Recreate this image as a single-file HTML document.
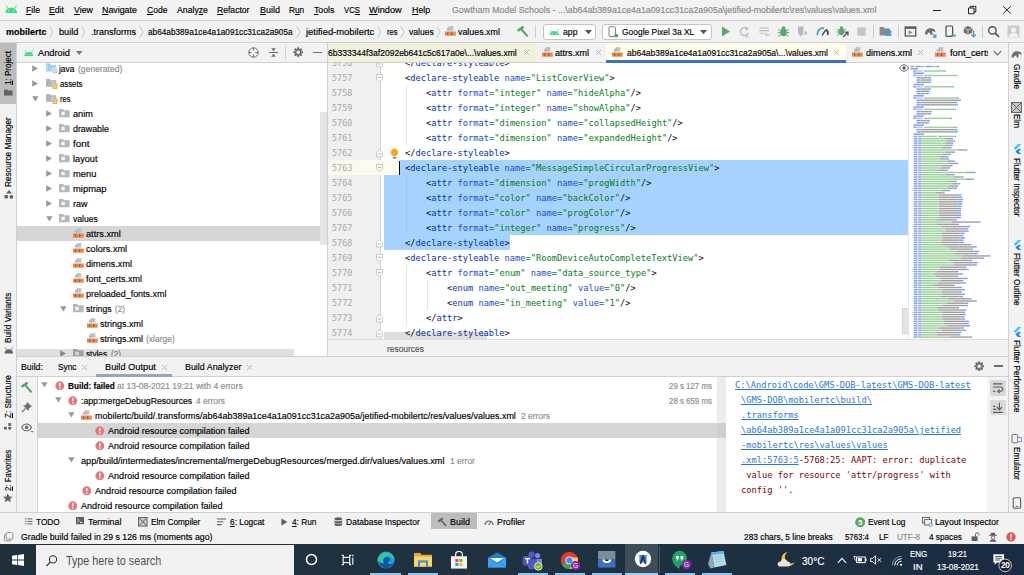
<!DOCTYPE html>
<html><head><meta charset="utf-8"><title>Android Studio</title>
<style>
html,body{margin:0;padding:0;}
body{width:1024px;height:575px;overflow:hidden;position:relative;background:#f2f2f2;font-family:"Liberation Sans",sans-serif;font-size:9px;color:#000;}
.b{position:absolute;box-sizing:border-box;overflow:hidden;}
.t{position:absolute;white-space:pre;display:block;transform-origin:0 50%;-webkit-text-stroke:0.16px;}
.t u{text-decoration:underline;text-underline-offset:1px;text-decoration-thickness:0.8px;}
.c{position:absolute;white-space:pre;font-family:"DejaVu Sans Mono","Liberation Mono",monospace;font-size:8.1px;line-height:15px;height:15px;transform-origin:0 0;transform:scaleX(1.0755);color:#080808;}
.tg{color:#0033b3}.an{color:#174ad4}.av{color:#067d17}
.v{position:absolute;white-space:pre;transform-origin:0 0;transform:rotate(90deg);font-size:9px;line-height:12px;}
.vl{position:absolute;white-space:pre;transform-origin:0 0;transform:rotate(-90deg);font-size:9px;line-height:12px;}
a.lk{color:#2d76d2;text-decoration:underline;text-underline-offset:1px;text-decoration-thickness:0.7px;}
</style></head><body>
<div class="b" style="left:0.00px;top:43.00px;width:16.00px;height:469.00px;background:#f2f2f2;"></div>
<div class="b" style="left:16.00px;top:43.00px;width:1.00px;height:469.00px;background:#d1d1d1;"></div>
<div class="b" style="left:0.00px;top:43.00px;width:16.00px;height:61.00px;background:#bdbdbd;"></div>
<span class="t" style="transform-origin:0 0;transform:rotate(-90deg) scaleX(0.9044);line-height:12px;left:1.80px;top:85.00px;font-size:8.90px;color:#000;"><u>1</u>: Project</span>
<svg class="b" style="left:4.20px;top:88.60px;" width="9" height="7" viewBox="0 0 9 7"><path d="M0 0.4 H3.4 L4.4 1.5 H8.6 V6.6 H0 Z" fill="#5e6468"/></svg>
<span class="t" style="transform-origin:0 0;transform:rotate(-90deg) scaleX(0.9249);line-height:12px;left:1.80px;top:186.50px;font-size:8.90px;color:#000;">Resource Manager</span>
<svg class="b" style="left:3.50px;top:190.00px;" width="10" height="9" viewBox="0 0 10 9"><path d="M5 0 L8 3.6 H2 Z" fill="#5e6468"/><rect x="0.5" y="5" width="3.4" height="3.4" fill="#5e6468"/><circle cx="7.4" cy="6.8" r="1.9" fill="#5e6468"/></svg>
<span class="t" style="transform-origin:0 0;transform:rotate(-90deg) scaleX(0.9309);line-height:12px;left:1.80px;top:343.00px;font-size:8.90px;color:#000;">Build Variants</span>
<svg class="b" style="left:3.60px;top:347.20px;" width="9.6" height="7" viewBox="0 0 11 8"><path d="M0.5 7.5 A5 5 0 0 1 10.5 7.5 Z" fill="#5e6468"/><path d="M2.6 3 L1.4 0.8 M8.4 3 L9.6 0.8" stroke="#5e6468" stroke-width="0.9"/></svg>
<span class="t" style="transform-origin:0 0;transform:rotate(-90deg) scaleX(0.9207);line-height:12px;left:1.80px;top:418.20px;font-size:8.90px;color:#000;"><u>Z</u>: Structure</span>
<svg class="b" style="left:4.40px;top:423.20px;" width="8" height="6.6" viewBox="0 0 10 8"><rect x="0" y="4.6" width="3.6" height="3.4" fill="#5e6468"/><rect x="5.4" y="4.6" width="3.6" height="3.4" fill="#5e6468"/><rect x="5.4" y="0" width="3.6" height="3.4" fill="#5e6468"/></svg>
<span class="t" style="transform-origin:0 0;transform:rotate(-90deg) scaleX(0.8905);line-height:12px;left:1.80px;top:490.50px;font-size:8.90px;color:#000;"><u>2</u>: Favorites</span>
<svg class="b" style="left:3.40px;top:493.20px;" width="9.6" height="9.6" viewBox="0 0 11 11"><path d="M5.5 0.4 L7.1 3.9 L10.9 4.3 L8.1 6.9 L8.9 10.6 L5.5 8.7 L2.1 10.6 L2.9 6.9 L0.1 4.3 L3.9 3.9 Z" fill="#5e6468"/></svg>
<div class="b" style="left:17.00px;top:43.00px;width:310.00px;height:19.00px;background:#f2f2f2;"></div>
<div class="b" style="left:17.00px;top:62.00px;width:310.00px;height:1.00px;background:#d1d1d1;"></div>
<svg class="b" style="left:24.00px;top:49.60px;" width="9.6" height="6.336" viewBox="0 0 12 8"><path d="M0.3 8 A5.7 5.6 0 0 1 11.7 8 Z" fill="#3ddc84"/><path d="M2.6 3.2 L1.2 0.8 M9.4 3.2 L10.8 0.8" stroke="#3ddc84" stroke-width="0.9" stroke-linecap="round"/><circle cx="3.6" cy="5.6" r="0.6" fill="#fff"/><circle cx="8.4" cy="5.6" r="0.6" fill="#fff"/></svg>
<span class="t " style="left:37.50px;top:45.70px;line-height:14px;font-size:8.90px;color:#000;transform:scaleX(1.0432);">Android</span>
<svg class="b" style="left:75.50px;top:51.00px;" width="7" height="5" viewBox="0 0 7 5"><path d="M0 0 H6.6 L3.3 4 Z" fill="#7a7a7a"/></svg>
<svg class="b" style="left:247.00px;top:46.00px;" width="13" height="13" viewBox="0 0 13 13"><circle cx="6.5" cy="6.5" r="4.7" fill="none" stroke="#6e6e6e" stroke-width="1"/><path d="M6.5 1.8 V4.6 M6.5 8.4 V11.2 M1.8 6.5 H4.6 M8.4 6.5 H11.2" stroke="#6e6e6e" stroke-width="1"/></svg>
<svg class="b" style="left:266.50px;top:46.00px;" width="13" height="13" viewBox="0 0 13 13"><path d="M2 6.5 H11" stroke="#6e6e6e" stroke-width="1.1"/><path d="M6.5 5.2 L4.2 2.2 H8.8 Z M6.5 7.8 L4.2 10.8 H8.8 Z" fill="#6e6e6e"/></svg>
<div class="b" style="left:285.00px;top:46.00px;width:1.00px;height:13.00px;background:#d0d0d0;"></div>
<svg class="b" style="left:292.50px;top:47.10px;" width="10.4" height="10.4" viewBox="0 0 12 12"><path d="M9.60 6.00 L11.60 6.00 M8.55 8.55 L9.96 9.96 M6.00 9.60 L6.00 11.60 M3.45 8.55 L2.04 9.96 M2.40 6.00 L0.40 6.00 M3.45 3.45 L2.04 2.04 M6.00 2.40 L6.00 0.40 M8.55 3.45 L9.96 2.04 " stroke="#6e6e6e" stroke-width="2.2"/><circle cx="6" cy="6" r="3.1" fill="none" stroke="#6e6e6e" stroke-width="2"/></svg>
<div class="b" style="left:312.50px;top:51.50px;width:9.00px;height:1.40px;background:#6e6e6e;"></div>
<div class="b" style="left:17.00px;top:63.00px;width:310.00px;height:293.00px;background:#fff;"></div>
<svg class="b" style="left:32.00px;top:64.50px;" width="7" height="8" viewBox="0 0 7 8"><path d="M0.2 0.2 V6.8 L6 3.5 Z" fill="#999"/></svg>
<svg class="b" style="left:46.00px;top:63.30px;" width="12" height="12" viewBox="0 0 12 12"><path d="M0 0.6 H4 L5 1.9 H10.2 V8.4 H0 Z" fill="#9ed0f3"/><path d="M1.2 1.4 V7.4" stroke="#cfe8fa" stroke-width="0.8"/><circle cx="8.8" cy="8" r="3.2" fill="#fff"/><path d="M8.8 5.2 V10.8 M6 8 H11.6 M6.8 6 L10.8 10 M10.8 6 L6.8 10" stroke="#8c9ba8" stroke-width="0.8"/><circle cx="8.8" cy="8" r="0.9" fill="#fff"/></svg>
<span class="t " style="left:59.00px;top:62.00px;line-height:14px;font-size:8.90px;color:#000;transform:scaleX(0.9494);">java</span>
<span class="t " style="left:78.00px;top:62.00px;line-height:14px;font-size:8.90px;color:#8c8c8c;transform:scaleX(0.9672);">(generated)</span>
<svg class="b" style="left:32.00px;top:79.50px;" width="7" height="8" viewBox="0 0 7 8"><path d="M0.2 0.2 V6.8 L6 3.5 Z" fill="#999"/></svg>
<svg class="b" style="left:46.00px;top:78.30px;" width="12" height="12" viewBox="0 0 12 12"><path d="M0 1 H4 L5 2.3 H10.2 V8.8 H0 Z" fill="#aab6c0"/><path d="M5.2 3.6 H9 V8.8 H5.2 Z" fill="#c3ccd3"/><rect x="6.5" y="5.4" width="4.9" height="5.6" fill="#f2b05c"/><path d="M7.4 7 H10.4 M7.4 8.3 H10.4 M7.4 9.6 H10.4" stroke="#f9d9ae" stroke-width="0.6"/></svg>
<span class="t " style="left:59.50px;top:77.00px;line-height:14px;font-size:8.90px;color:#000;transform:scaleX(0.8748);">assets</span>
<svg class="b" style="left:31.00px;top:96.10px;" width="9" height="7" viewBox="0 0 9 7"><path d="M1.2 0.2 H7.6 L4.4 5.6 Z" fill="#999"/></svg>
<svg class="b" style="left:46.00px;top:93.30px;" width="12" height="12" viewBox="0 0 12 12"><path d="M0 1 H4 L5 2.3 H10.2 V8.8 H0 Z" fill="#aab6c0"/><path d="M5.2 3.6 H9 V8.8 H5.2 Z" fill="#c3ccd3"/><rect x="6.5" y="5.4" width="4.9" height="5.6" fill="#f2b05c"/><path d="M7.4 7 H10.4 M7.4 8.3 H10.4 M7.4 9.6 H10.4" stroke="#f9d9ae" stroke-width="0.6"/></svg>
<span class="t " style="left:59.50px;top:92.00px;line-height:14px;font-size:8.90px;color:#000;transform:scaleX(0.8493);">res</span>
<svg class="b" style="left:46.00px;top:109.50px;" width="7" height="8" viewBox="0 0 7 8"><path d="M0.2 0.2 V6.8 L6 3.5 Z" fill="#999"/></svg>
<svg class="b" style="left:59.00px;top:108.30px;" width="12" height="12" viewBox="0 0 12 12"><path d="M0 1 H4 L5 2.3 H10.6 V9.2 H0 Z" fill="#aeb9c2"/><rect x="2.4" y="3.8" width="3.4" height="3.4" fill="#f4f6f7"/></svg>
<span class="t " style="left:72.50px;top:107.00px;line-height:14px;font-size:8.90px;color:#000;transform:scaleX(1.0368);">anim</span>
<svg class="b" style="left:46.00px;top:124.50px;" width="7" height="8" viewBox="0 0 7 8"><path d="M0.2 0.2 V6.8 L6 3.5 Z" fill="#999"/></svg>
<svg class="b" style="left:59.00px;top:123.30px;" width="12" height="12" viewBox="0 0 12 12"><path d="M0 1 H4 L5 2.3 H10.6 V9.2 H0 Z" fill="#aeb9c2"/><rect x="2.4" y="3.8" width="3.4" height="3.4" fill="#f4f6f7"/></svg>
<span class="t " style="left:72.50px;top:122.00px;line-height:14px;font-size:8.90px;color:#000;transform:scaleX(0.9968);">drawable</span>
<svg class="b" style="left:46.00px;top:139.50px;" width="7" height="8" viewBox="0 0 7 8"><path d="M0.2 0.2 V6.8 L6 3.5 Z" fill="#999"/></svg>
<svg class="b" style="left:59.00px;top:138.30px;" width="12" height="12" viewBox="0 0 12 12"><path d="M0 1 H4 L5 2.3 H10.6 V9.2 H0 Z" fill="#aeb9c2"/><rect x="2.4" y="3.8" width="3.4" height="3.4" fill="#f4f6f7"/></svg>
<span class="t " style="left:72.50px;top:137.00px;line-height:14px;font-size:8.90px;color:#000;transform:scaleX(1.1116);">font</span>
<svg class="b" style="left:46.00px;top:154.50px;" width="7" height="8" viewBox="0 0 7 8"><path d="M0.2 0.2 V6.8 L6 3.5 Z" fill="#999"/></svg>
<svg class="b" style="left:59.00px;top:153.30px;" width="12" height="12" viewBox="0 0 12 12"><path d="M0 1 H4 L5 2.3 H10.6 V9.2 H0 Z" fill="#aeb9c2"/><rect x="2.4" y="3.8" width="3.4" height="3.4" fill="#f4f6f7"/></svg>
<span class="t " style="left:72.50px;top:152.00px;line-height:14px;font-size:8.90px;color:#000;transform:scaleX(1.0317);">layout</span>
<svg class="b" style="left:46.00px;top:169.50px;" width="7" height="8" viewBox="0 0 7 8"><path d="M0.2 0.2 V6.8 L6 3.5 Z" fill="#999"/></svg>
<svg class="b" style="left:59.00px;top:168.30px;" width="12" height="12" viewBox="0 0 12 12"><path d="M0 1 H4 L5 2.3 H10.6 V9.2 H0 Z" fill="#aeb9c2"/><rect x="2.4" y="3.8" width="3.4" height="3.4" fill="#f4f6f7"/></svg>
<span class="t " style="left:72.50px;top:167.00px;line-height:14px;font-size:8.90px;color:#000;transform:scaleX(1.0557);">menu</span>
<svg class="b" style="left:46.00px;top:184.50px;" width="7" height="8" viewBox="0 0 7 8"><path d="M0.2 0.2 V6.8 L6 3.5 Z" fill="#999"/></svg>
<svg class="b" style="left:59.00px;top:183.30px;" width="12" height="12" viewBox="0 0 12 12"><path d="M0 1 H4 L5 2.3 H10.6 V9.2 H0 Z" fill="#aeb9c2"/><rect x="2.4" y="3.8" width="3.4" height="3.4" fill="#f4f6f7"/></svg>
<span class="t " style="left:72.50px;top:182.00px;line-height:14px;font-size:8.90px;color:#000;transform:scaleX(1.0584);">mipmap</span>
<svg class="b" style="left:46.00px;top:199.50px;" width="7" height="8" viewBox="0 0 7 8"><path d="M0.2 0.2 V6.8 L6 3.5 Z" fill="#999"/></svg>
<svg class="b" style="left:59.00px;top:198.30px;" width="12" height="12" viewBox="0 0 12 12"><path d="M0 1 H4 L5 2.3 H10.6 V9.2 H0 Z" fill="#aeb9c2"/><rect x="2.4" y="3.8" width="3.4" height="3.4" fill="#f4f6f7"/></svg>
<span class="t " style="left:72.50px;top:197.00px;line-height:14px;font-size:8.90px;color:#000;transform:scaleX(1.0111);">raw</span>
<svg class="b" style="left:45.00px;top:216.10px;" width="9" height="7" viewBox="0 0 9 7"><path d="M1.2 0.2 H7.6 L4.4 5.6 Z" fill="#999"/></svg>
<svg class="b" style="left:59.00px;top:213.30px;" width="12" height="12" viewBox="0 0 12 12"><path d="M0 1 H4 L5 2.3 H10.6 V9.2 H0 Z" fill="#aeb9c2"/><rect x="2.4" y="3.8" width="3.4" height="3.4" fill="#f4f6f7"/></svg>
<span class="t " style="left:72.50px;top:212.00px;line-height:14px;font-size:8.90px;color:#000;transform:scaleX(0.9718);">values</span>
<div class="b" style="left:17.00px;top:226.20px;width:303.00px;height:15.00px;background:#d5d5d5;"></div>
<svg class="b" style="left:73.00px;top:227.70px;" width="11" height="11" viewBox="0 0 12 12"><rect x="0" y="6" width="11.8" height="4.6" fill="#f0884a"/><path d="M3.6 7.2 L2.3 8.3 L3.6 9.4 M6.6 7.2 L7.9 8.3 L6.6 9.4" stroke="#4a3226" stroke-width="0.85" fill="none"/><path d="M2 5 V2.8 L4.6 0.3 H9 V5 Z" fill="#a9b3bb"/><path d="M2 2.8 L4.6 0.3 V2.8 Z" fill="#d5dade"/><path d="M6.2 0.6 V4.6 M7.8 0.6 V4.6" stroke="#e9ecee" stroke-width="0.5"/></svg>
<span class="t " style="left:86.40px;top:227.00px;line-height:14px;font-size:8.90px;color:#000;transform:scaleX(1.0380);">attrs.xml</span>
<svg class="b" style="left:73.00px;top:242.70px;" width="11" height="11" viewBox="0 0 12 12"><rect x="0" y="6" width="11.8" height="4.6" fill="#f0884a"/><path d="M3.6 7.2 L2.3 8.3 L3.6 9.4 M6.6 7.2 L7.9 8.3 L6.6 9.4" stroke="#4a3226" stroke-width="0.85" fill="none"/><path d="M2 5 V2.8 L4.6 0.3 H9 V5 Z" fill="#a9b3bb"/><path d="M2 2.8 L4.6 0.3 V2.8 Z" fill="#d5dade"/><path d="M6.2 0.6 V4.6 M7.8 0.6 V4.6" stroke="#e9ecee" stroke-width="0.5"/></svg>
<span class="t " style="left:86.40px;top:242.00px;line-height:14px;font-size:8.90px;color:#000;transform:scaleX(1.0286);">colors.xml</span>
<svg class="b" style="left:73.00px;top:257.70px;" width="11" height="11" viewBox="0 0 12 12"><rect x="0" y="6" width="11.8" height="4.6" fill="#f0884a"/><path d="M3.6 7.2 L2.3 8.3 L3.6 9.4 M6.6 7.2 L7.9 8.3 L6.6 9.4" stroke="#4a3226" stroke-width="0.85" fill="none"/><path d="M2 5 V2.8 L4.6 0.3 H9 V5 Z" fill="#a9b3bb"/><path d="M2 2.8 L4.6 0.3 V2.8 Z" fill="#d5dade"/><path d="M6.2 0.6 V4.6 M7.8 0.6 V4.6" stroke="#e9ecee" stroke-width="0.5"/></svg>
<span class="t " style="left:86.40px;top:257.00px;line-height:14px;font-size:8.90px;color:#000;transform:scaleX(1.0244);">dimens.xml</span>
<svg class="b" style="left:73.00px;top:272.70px;" width="11" height="11" viewBox="0 0 12 12"><rect x="0" y="6" width="11.8" height="4.6" fill="#f0884a"/><path d="M3.6 7.2 L2.3 8.3 L3.6 9.4 M6.6 7.2 L7.9 8.3 L6.6 9.4" stroke="#4a3226" stroke-width="0.85" fill="none"/><path d="M2 5 V2.8 L4.6 0.3 H9 V5 Z" fill="#a9b3bb"/><path d="M2 2.8 L4.6 0.3 V2.8 Z" fill="#d5dade"/><path d="M6.2 0.6 V4.6 M7.8 0.6 V4.6" stroke="#e9ecee" stroke-width="0.5"/></svg>
<span class="t " style="left:86.40px;top:272.00px;line-height:14px;font-size:8.90px;color:#000;transform:scaleX(1.0128);">font_certs.xml</span>
<svg class="b" style="left:73.00px;top:287.70px;" width="11" height="11" viewBox="0 0 12 12"><rect x="0" y="6" width="11.8" height="4.6" fill="#f0884a"/><path d="M3.6 7.2 L2.3 8.3 L3.6 9.4 M6.6 7.2 L7.9 8.3 L6.6 9.4" stroke="#4a3226" stroke-width="0.85" fill="none"/><path d="M2 5 V2.8 L4.6 0.3 H9 V5 Z" fill="#a9b3bb"/><path d="M2 2.8 L4.6 0.3 V2.8 Z" fill="#d5dade"/><path d="M6.2 0.6 V4.6 M7.8 0.6 V4.6" stroke="#e9ecee" stroke-width="0.5"/></svg>
<span class="t " style="left:86.40px;top:287.00px;line-height:14px;font-size:8.90px;color:#000;transform:scaleX(1.0057);">preloaded_fonts.xml</span>
<svg class="b" style="left:58.50px;top:306.10px;" width="9" height="7" viewBox="0 0 9 7"><path d="M1.2 0.2 H7.6 L4.4 5.6 Z" fill="#999"/></svg>
<svg class="b" style="left:73.00px;top:303.30px;" width="12" height="12" viewBox="0 0 12 12"><path d="M0 1 H4 L5 2.3 H10.6 V9.2 H0 Z" fill="#aeb9c2"/><rect x="2.4" y="3.8" width="3.4" height="3.4" fill="#f4f6f7"/></svg>
<span class="t " style="left:86.40px;top:302.00px;line-height:14px;font-size:8.90px;color:#000;transform:scaleX(0.9767);">strings</span>
<span class="t " style="left:115.00px;top:302.00px;line-height:14px;font-size:8.90px;color:#8c8c8c;transform:scaleX(0.9194);">(2)</span>
<svg class="b" style="left:86.50px;top:317.70px;" width="11" height="11" viewBox="0 0 12 12"><rect x="0" y="6" width="11.8" height="4.6" fill="#f0884a"/><path d="M3.6 7.2 L2.3 8.3 L3.6 9.4 M6.6 7.2 L7.9 8.3 L6.6 9.4" stroke="#4a3226" stroke-width="0.85" fill="none"/><path d="M2 5 V2.8 L4.6 0.3 H9 V5 Z" fill="#a9b3bb"/><path d="M2 2.8 L4.6 0.3 V2.8 Z" fill="#d5dade"/><path d="M6.2 0.6 V4.6 M7.8 0.6 V4.6" stroke="#e9ecee" stroke-width="0.5"/></svg>
<span class="t " style="left:100.00px;top:317.00px;line-height:14px;font-size:8.90px;color:#000;transform:scaleX(1.0112);">strings.xml</span>
<svg class="b" style="left:86.50px;top:332.70px;" width="11" height="11" viewBox="0 0 12 12"><rect x="0" y="6" width="11.8" height="4.6" fill="#f0884a"/><path d="M3.6 7.2 L2.3 8.3 L3.6 9.4 M6.6 7.2 L7.9 8.3 L6.6 9.4" stroke="#4a3226" stroke-width="0.85" fill="none"/><path d="M2 5 V2.8 L4.6 0.3 H9 V5 Z" fill="#a9b3bb"/><path d="M2 2.8 L4.6 0.3 V2.8 Z" fill="#d5dade"/><path d="M6.2 0.6 V4.6 M7.8 0.6 V4.6" stroke="#e9ecee" stroke-width="0.5"/></svg>
<span class="t " style="left:100.00px;top:332.00px;line-height:14px;font-size:8.90px;color:#000;transform:scaleX(1.0112);">strings.xml</span>
<span class="t " style="left:146.00px;top:332.00px;line-height:14px;font-size:8.90px;color:#8c8c8c;transform:scaleX(0.9614);">(xlarge)</span>
<svg class="b" style="left:59.50px;top:349.50px;" width="7" height="8" viewBox="0 0 7 8"><path d="M0.2 0.2 V6.8 L6 3.5 Z" fill="#999"/></svg>
<svg class="b" style="left:73.00px;top:348.30px;" width="12" height="12" viewBox="0 0 12 12"><path d="M0 1 H4 L5 2.3 H10.6 V9.2 H0 Z" fill="#aeb9c2"/><rect x="2.4" y="3.8" width="3.4" height="3.4" fill="#f4f6f7"/></svg>
<span class="t " style="left:86.40px;top:347.00px;line-height:14px;font-size:8.90px;color:#000;transform:scaleX(0.9275);">styles</span>
<span class="t " style="left:110.50px;top:347.00px;line-height:14px;font-size:8.90px;color:#8c8c8c;transform:scaleX(0.9194);">(2)</span>
<div class="b" style="left:17.00px;top:349.00px;width:277.00px;height:7.00px;background:rgba(0,0,0,0.12);"></div>
<div class="b" style="left:319.50px;top:112.00px;width:7.50px;height:133.00px;background:#e2e2e2;opacity:0.9;"></div>
<div class="b" style="left:17.00px;top:356.00px;width:310.00px;height:1.00px;background:#d1d1d1;"></div>
<div class="b" style="left:328.00px;top:63.00px;width:680.00px;height:277.00px;background:#fff;"></div>
<div class="b" style="left:328.00px;top:63.00px;width:51.50px;height:277.00px;background:#f0f0f0;"></div>
<div class="b" style="left:379.50px;top:63.00px;width:1.00px;height:277.00px;background:#d4d4d4;"></div>
<div class="b" style="left:328.00px;top:160.40px;width:580.00px;height:15.00px;background:#fcfaed;"></div>
<div class="b" style="left:380.50px;top:160.40px;width:18.00px;height:15.00px;background:#fcfaed;"></div>
<div class="b" style="left:400.00px;top:160.40px;width:508.00px;height:15.00px;background:#a6d2ff;"></div>
<div class="b" style="left:398.50px;top:161.00px;width:1.80px;height:13.60px;background:#000;"></div>
<div class="b" style="left:384.00px;top:175.40px;width:524.00px;height:60.00px;background:#a6d2ff;"></div>
<div class="b" style="left:384.00px;top:235.40px;width:126.00px;height:15.00px;background:#a6d2ff;"></div>
<div class="b" style="left:406.30px;top:85.40px;width:1.00px;height:60.00px;background:#e4e4e4;"></div>
<div class="b" style="left:406.30px;top:175.40px;width:1.00px;height:60.00px;background:#8fb9e6;opacity:.5;"></div>
<div class="b" style="left:406.30px;top:265.40px;width:1.00px;height:60.00px;background:#e4e4e4;"></div>
<div class="b" style="left:427.30px;top:280.40px;width:1.00px;height:30.00px;background:#e4e4e4;"></div>
<div class="c" style="left:331.7px;top:56.10px;color:#a9a9a9;transform:scaleX(1.04);">5756</div>
<div class="c" style="left:331.7px;top:71.10px;color:#a9a9a9;transform:scaleX(1.04);">5757</div>
<div class="c" style="left:331.7px;top:86.10px;color:#a9a9a9;transform:scaleX(1.04);">5758</div>
<div class="c" style="left:331.7px;top:101.10px;color:#a9a9a9;transform:scaleX(1.04);">5759</div>
<div class="c" style="left:331.7px;top:116.10px;color:#a9a9a9;transform:scaleX(1.04);">5760</div>
<div class="c" style="left:331.7px;top:131.10px;color:#a9a9a9;transform:scaleX(1.04);">5761</div>
<div class="c" style="left:331.7px;top:146.10px;color:#a9a9a9;transform:scaleX(1.04);">5762</div>
<div class="c" style="left:331.7px;top:161.10px;color:#a9a9a9;transform:scaleX(1.04);">5763</div>
<div class="c" style="left:331.7px;top:176.10px;color:#a9a9a9;transform:scaleX(1.04);">5764</div>
<div class="c" style="left:331.7px;top:191.10px;color:#a9a9a9;transform:scaleX(1.04);">5765</div>
<div class="c" style="left:331.7px;top:206.10px;color:#a9a9a9;transform:scaleX(1.04);">5766</div>
<div class="c" style="left:331.7px;top:221.10px;color:#a9a9a9;transform:scaleX(1.04);">5767</div>
<div class="c" style="left:331.7px;top:236.10px;color:#a9a9a9;transform:scaleX(1.04);">5768</div>
<div class="c" style="left:331.7px;top:251.10px;color:#a9a9a9;transform:scaleX(1.04);">5769</div>
<div class="c" style="left:331.7px;top:266.10px;color:#a9a9a9;transform:scaleX(1.04);">5770</div>
<div class="c" style="left:331.7px;top:281.10px;color:#a9a9a9;transform:scaleX(1.04);">5771</div>
<div class="c" style="left:331.7px;top:296.10px;color:#a9a9a9;transform:scaleX(1.04);">5772</div>
<div class="c" style="left:331.7px;top:311.10px;color:#a9a9a9;transform:scaleX(1.04);">5773</div>
<div class="c" style="left:331.7px;top:326.10px;color:#a9a9a9;transform:scaleX(1.04);">5774</div>
<svg class="b" style="left:376.00px;top:59.40px;" width="7" height="8.4" viewBox="0 0 7 8.4"><path d="M0.5 7.9 H6.5 V3.4 L3.5 0.6 L0.5 3.4 Z" fill="#fff" stroke="#c2c2c2" stroke-width="0.9"/><path d="M2 5 H5" stroke="#a4a4a4" stroke-width="0.9"/></svg>
<svg class="b" style="left:376.00px;top:74.40px;" width="7" height="8.4" viewBox="0 0 7 8.4"><path d="M0.5 0.5 H6.5 V5 L3.5 7.8 L0.5 5 Z" fill="#fff" stroke="#c2c2c2" stroke-width="0.9"/><path d="M2 3.4 H5" stroke="#a4a4a4" stroke-width="0.9"/></svg>
<svg class="b" style="left:376.00px;top:149.40px;" width="7" height="8.4" viewBox="0 0 7 8.4"><path d="M0.5 7.9 H6.5 V3.4 L3.5 0.6 L0.5 3.4 Z" fill="#fff" stroke="#c2c2c2" stroke-width="0.9"/><path d="M2 5 H5" stroke="#a4a4a4" stroke-width="0.9"/></svg>
<svg class="b" style="left:376.00px;top:164.40px;" width="7" height="8.4" viewBox="0 0 7 8.4"><path d="M0.5 0.5 H6.5 V5 L3.5 7.8 L0.5 5 Z" fill="#fff" stroke="#c2c2c2" stroke-width="0.9"/><path d="M2 3.4 H5" stroke="#a4a4a4" stroke-width="0.9"/></svg>
<svg class="b" style="left:376.00px;top:239.40px;" width="7" height="8.4" viewBox="0 0 7 8.4"><path d="M0.5 7.9 H6.5 V3.4 L3.5 0.6 L0.5 3.4 Z" fill="#fff" stroke="#c2c2c2" stroke-width="0.9"/><path d="M2 5 H5" stroke="#a4a4a4" stroke-width="0.9"/></svg>
<svg class="b" style="left:376.00px;top:254.40px;" width="7" height="8.4" viewBox="0 0 7 8.4"><path d="M0.5 0.5 H6.5 V5 L3.5 7.8 L0.5 5 Z" fill="#fff" stroke="#c2c2c2" stroke-width="0.9"/><path d="M2 3.4 H5" stroke="#a4a4a4" stroke-width="0.9"/></svg>
<svg class="b" style="left:376.00px;top:269.40px;" width="7" height="8.4" viewBox="0 0 7 8.4"><path d="M0.5 0.5 H6.5 V5 L3.5 7.8 L0.5 5 Z" fill="#fff" stroke="#c2c2c2" stroke-width="0.9"/><path d="M2 3.4 H5" stroke="#a4a4a4" stroke-width="0.9"/></svg>
<svg class="b" style="left:376.00px;top:314.40px;" width="7" height="8.4" viewBox="0 0 7 8.4"><path d="M0.5 7.9 H6.5 V3.4 L3.5 0.6 L0.5 3.4 Z" fill="#fff" stroke="#c2c2c2" stroke-width="0.9"/><path d="M2 5 H5" stroke="#a4a4a4" stroke-width="0.9"/></svg>
<svg class="b" style="left:376.00px;top:329.40px;" width="7" height="8.4" viewBox="0 0 7 8.4"><path d="M0.5 7.9 H6.5 V3.4 L3.5 0.6 L0.5 3.4 Z" fill="#fff" stroke="#c2c2c2" stroke-width="0.9"/><path d="M2 5 H5" stroke="#a4a4a4" stroke-width="0.9"/></svg>
<svg class="b" style="left:390.00px;top:147.60px;" width="9" height="11.7" viewBox="0 0 10 13"><path d="M5 0.6 A4.2 4.2 0 0 1 7.4 8.2 V9.2 H2.6 V8.2 A4.2 4.2 0 0 1 5 0.6 Z" fill="#f5a623"/><rect x="3" y="10" width="4" height="1.2" fill="#7a7a7a"/><rect x="3.6" y="11.6" width="2.8" height="1" fill="#7a7a7a"/></svg>
<div class="c" style="left:405.20px;top:55.90px;"><span class="">&lt;/</span><span class="tg">declare-styleable</span><span class="">&gt;</span></div>
<div class="c" style="left:405.20px;top:70.90px;"><span class="">&lt;</span><span class="tg">declare-styleable</span><span class="an"> name</span><span class="av">="ListCoverView"</span><span class="">&gt;</span></div>
<div class="c" style="left:426.18px;top:85.90px;"><span class="">&lt;</span><span class="tg">attr</span><span class="an"> format</span><span class="av">="integer"</span><span class="an"> name</span><span class="av">="hideAlpha"</span><span class="">/&gt;</span></div>
<div class="c" style="left:426.18px;top:100.90px;"><span class="">&lt;</span><span class="tg">attr</span><span class="an"> format</span><span class="av">="integer"</span><span class="an"> name</span><span class="av">="showAlpha"</span><span class="">/&gt;</span></div>
<div class="c" style="left:426.18px;top:115.90px;"><span class="">&lt;</span><span class="tg">attr</span><span class="an"> format</span><span class="av">="dimension"</span><span class="an"> name</span><span class="av">="collapsedHeight"</span><span class="">/&gt;</span></div>
<div class="c" style="left:426.18px;top:130.90px;"><span class="">&lt;</span><span class="tg">attr</span><span class="an"> format</span><span class="av">="dimension"</span><span class="an"> name</span><span class="av">="expandedHeight"</span><span class="">/&gt;</span></div>
<div class="c" style="left:405.20px;top:145.90px;"><span class="">&lt;/</span><span class="tg">declare-styleable</span><span class="">&gt;</span></div>
<div class="c" style="left:405.20px;top:160.90px;"><span class="">&lt;</span><span class="tg">declare-styleable</span><span class="an"> name</span><span class="av">="MessageSimpleCircularProgressView"</span><span class="">&gt;</span></div>
<div class="c" style="left:426.18px;top:175.90px;"><span class="">&lt;</span><span class="tg">attr</span><span class="an"> format</span><span class="av">="dimension"</span><span class="an"> name</span><span class="av">="progWidth"</span><span class="">/&gt;</span></div>
<div class="c" style="left:426.18px;top:190.90px;"><span class="">&lt;</span><span class="tg">attr</span><span class="an"> format</span><span class="av">="color"</span><span class="an"> name</span><span class="av">="backColor"</span><span class="">/&gt;</span></div>
<div class="c" style="left:426.18px;top:205.90px;"><span class="">&lt;</span><span class="tg">attr</span><span class="an"> format</span><span class="av">="color"</span><span class="an"> name</span><span class="av">="progColor"</span><span class="">/&gt;</span></div>
<div class="c" style="left:426.18px;top:220.90px;"><span class="">&lt;</span><span class="tg">attr</span><span class="an"> format</span><span class="av">="integer"</span><span class="an"> name</span><span class="av">="progress"</span><span class="">/&gt;</span></div>
<div class="c" style="left:405.20px;top:235.90px;"><span class="">&lt;/</span><span class="tg">declare-styleable</span><span class="">&gt;</span></div>
<div class="c" style="left:405.20px;top:250.90px;"><span class="">&lt;</span><span class="tg">declare-styleable</span><span class="an"> name</span><span class="av">="RoomDeviceAutoCompleteTextView"</span><span class="">&gt;</span></div>
<div class="c" style="left:426.18px;top:265.90px;"><span class="">&lt;</span><span class="tg">attr</span><span class="an"> format</span><span class="av">="enum"</span><span class="an"> name</span><span class="av">="data_source_type"</span><span class="">&gt;</span></div>
<div class="c" style="left:447.16px;top:280.90px;"><span class="">&lt;</span><span class="tg">enum</span><span class="an"> name</span><span class="av">="out_meeting"</span><span class="an"> value</span><span class="av">="0"</span><span class="">/&gt;</span></div>
<div class="c" style="left:447.16px;top:295.90px;"><span class="">&lt;</span><span class="tg">enum</span><span class="an"> name</span><span class="av">="in_meeting"</span><span class="an"> value</span><span class="av">="1"</span><span class="">/&gt;</span></div>
<div class="c" style="left:426.18px;top:310.90px;"><span class="">&lt;/</span><span class="tg">attr</span><span class="">&gt;</span></div>
<div class="c" style="left:405.20px;top:325.90px;"><span class="">&lt;/</span><span class="tg">declare-styleable</span><span class="">&gt;</span></div>
<div class="b" style="left:384.30px;top:332.00px;width:103.00px;height:7.00px;background:rgba(0,0,0,0.13);"></div>
<div class="b" style="left:902.30px;top:308.30px;width:6.50px;height:26.20px;background:#e4e4e4;border:1px dotted #c4c4c4;"></div>
<div class="b" style="left:908.30px;top:63.00px;width:1.00px;height:277.00px;background:#e6e6e6;"></div>
<svg class="b" style="left:898.50px;top:64.00px;" width="10" height="8" viewBox="0 0 10 8"><path d="M0.5 4 C2 1.4 3.6 0.8 5 0.8 C6.4 0.8 8 1.4 9.5 4 C8 6.6 6.4 7.2 5 7.2 C3.6 7.2 2 6.6 0.5 4 Z" fill="none" stroke="#555" stroke-width="0.9"/><circle cx="5" cy="4" r="1.7" fill="#555"/></svg>
<svg class="b" style="left:908.50px;top:63.00px;" width="100" height="277" viewBox="908.5 63 100 277"><rect x="910.0" y="65.80" width="3.5" height="1.40" fill="#7f9de6"/><rect x="915.0" y="65.80" width="5.0" height="1.40" fill="#7f9de6"/><rect x="920.0" y="65.80" width="4.0" height="1.40" fill="#98d098"/><rect x="925.0" y="65.80" width="6.0" height="1.40" fill="#7f9de6"/><rect x="931.0" y="65.80" width="6.5" height="1.40" fill="#98d098"/><rect x="937.5" y="65.80" width="1.0" height="1.40" fill="#777"/><rect x="910.0" y="68.05" width="7.5" height="1.40" fill="#7f9de6"/><rect x="913.0" y="70.31" width="9.5" height="1.40" fill="#b4c4f0"/><rect x="913.0" y="70.31" width="2.0" height="1.40" fill="#7f9de6"/><rect x="924.0" y="70.31" width="2.0" height="1.40" fill="#7f9de6"/><rect x="926.0" y="70.31" width="18.5" height="1.40" fill="#98d098"/><rect x="944.5" y="70.31" width="0.8" height="1.40" fill="#777"/><rect x="913.0" y="72.56" width="10.5" height="1.40" fill="#7f9de6"/><rect x="913.0" y="74.82" width="9.5" height="1.40" fill="#b4c4f0"/><rect x="913.0" y="74.82" width="2.0" height="1.40" fill="#7f9de6"/><rect x="924.0" y="74.82" width="2.0" height="1.40" fill="#7f9de6"/><rect x="926.0" y="74.82" width="30.0" height="1.40" fill="#98d098"/><rect x="956.0" y="74.82" width="0.8" height="1.40" fill="#777"/><rect x="916.0" y="77.07" width="4.0" height="1.40" fill="#7f9de6"/><rect x="920.0" y="77.07" width="7.0" height="1.40" fill="#9e9e9e"/><rect x="927.0" y="77.07" width="3.5" height="1.40" fill="#7f9de6"/><rect x="916.0" y="79.33" width="4.0" height="1.40" fill="#7f9de6"/><rect x="920.0" y="79.33" width="7.5" height="1.40" fill="#9e9e9e"/><rect x="927.5" y="79.33" width="3.5" height="1.40" fill="#7f9de6"/><rect x="916.0" y="81.58" width="4.0" height="1.40" fill="#7f9de6"/><rect x="920.0" y="81.58" width="7.0" height="1.40" fill="#9e9e9e"/><rect x="927.0" y="81.58" width="3.5" height="1.40" fill="#7f9de6"/><rect x="913.0" y="83.84" width="10.5" height="1.40" fill="#7f9de6"/><rect x="913.0" y="86.09" width="9.5" height="1.40" fill="#b4c4f0"/><rect x="913.0" y="86.09" width="2.0" height="1.40" fill="#7f9de6"/><rect x="924.0" y="86.09" width="2.0" height="1.40" fill="#7f9de6"/><rect x="926.0" y="86.09" width="26.5" height="1.40" fill="#98d098"/><rect x="952.5" y="86.09" width="0.8" height="1.40" fill="#777"/><rect x="916.0" y="88.35" width="4.0" height="1.40" fill="#7f9de6"/><rect x="920.0" y="88.35" width="7.0" height="1.40" fill="#9e9e9e"/><rect x="927.0" y="88.35" width="3.5" height="1.40" fill="#7f9de6"/><rect x="916.0" y="90.60" width="4.0" height="1.40" fill="#7f9de6"/><rect x="920.0" y="90.60" width="5.5" height="1.40" fill="#9e9e9e"/><rect x="925.5" y="90.60" width="3.5" height="1.40" fill="#7f9de6"/><rect x="916.0" y="92.86" width="4.0" height="1.40" fill="#7f9de6"/><rect x="920.0" y="92.86" width="5.0" height="1.40" fill="#9e9e9e"/><rect x="925.0" y="92.86" width="3.5" height="1.40" fill="#7f9de6"/><rect x="913.0" y="95.11" width="10.5" height="1.40" fill="#7f9de6"/><rect x="913.0" y="97.37" width="9.5" height="1.40" fill="#b4c4f0"/><rect x="913.0" y="97.37" width="2.0" height="1.40" fill="#7f9de6"/><rect x="924.0" y="97.37" width="2.0" height="1.40" fill="#7f9de6"/><rect x="926.0" y="97.37" width="31.5" height="1.40" fill="#98d098"/><rect x="957.5" y="97.37" width="0.8" height="1.40" fill="#777"/><rect x="916.0" y="99.62" width="4.0" height="1.40" fill="#7f9de6"/><rect x="920.0" y="99.62" width="37.0" height="1.40" fill="#9e9e9e"/><rect x="957.0" y="99.62" width="3.5" height="1.40" fill="#7f9de6"/><rect x="916.0" y="101.88" width="4.0" height="1.40" fill="#7f9de6"/><rect x="920.0" y="101.88" width="33.5" height="1.40" fill="#9e9e9e"/><rect x="953.5" y="101.88" width="3.5" height="1.40" fill="#7f9de6"/><rect x="916.0" y="104.13" width="4.0" height="1.40" fill="#7f9de6"/><rect x="920.0" y="104.13" width="34.0" height="1.40" fill="#9e9e9e"/><rect x="954.0" y="104.13" width="3.5" height="1.40" fill="#7f9de6"/><rect x="913.0" y="106.39" width="10.5" height="1.40" fill="#7f9de6"/><rect x="913.0" y="108.64" width="9.5" height="1.40" fill="#b4c4f0"/><rect x="913.0" y="108.64" width="2.0" height="1.40" fill="#7f9de6"/><rect x="924.0" y="108.64" width="2.0" height="1.40" fill="#7f9de6"/><rect x="926.0" y="108.64" width="28.5" height="1.40" fill="#98d098"/><rect x="954.5" y="108.64" width="0.8" height="1.40" fill="#777"/><rect x="916.0" y="110.90" width="4.0" height="1.40" fill="#7f9de6"/><rect x="920.0" y="110.90" width="8.0" height="1.40" fill="#9e9e9e"/><rect x="928.0" y="110.90" width="3.5" height="1.40" fill="#7f9de6"/><rect x="916.0" y="113.15" width="4.0" height="1.40" fill="#7f9de6"/><rect x="920.0" y="113.15" width="7.0" height="1.40" fill="#9e9e9e"/><rect x="927.0" y="113.15" width="3.5" height="1.40" fill="#7f9de6"/><rect x="913.0" y="115.41" width="10.5" height="1.40" fill="#7f9de6"/><rect x="913.0" y="117.66" width="9.5" height="1.40" fill="#b4c4f0"/><rect x="913.0" y="117.66" width="2.0" height="1.40" fill="#7f9de6"/><rect x="924.0" y="117.66" width="2.0" height="1.40" fill="#7f9de6"/><rect x="926.0" y="117.66" width="24.5" height="1.40" fill="#98d098"/><rect x="950.5" y="117.66" width="0.8" height="1.40" fill="#777"/><rect x="916.0" y="119.92" width="4.0" height="1.40" fill="#7f9de6"/><rect x="920.0" y="119.92" width="6.0" height="1.40" fill="#9e9e9e"/><rect x="926.0" y="119.92" width="3.5" height="1.40" fill="#7f9de6"/><rect x="916.0" y="122.17" width="4.0" height="1.40" fill="#7f9de6"/><rect x="920.0" y="122.17" width="5.0" height="1.40" fill="#9e9e9e"/><rect x="925.0" y="122.17" width="3.5" height="1.40" fill="#7f9de6"/><rect x="913.0" y="124.43" width="10.5" height="1.40" fill="#7f9de6"/><rect x="913.0" y="126.68" width="9.5" height="1.40" fill="#b4c4f0"/><rect x="913.0" y="126.68" width="2.0" height="1.40" fill="#7f9de6"/><rect x="924.0" y="126.68" width="2.0" height="1.40" fill="#7f9de6"/><rect x="926.0" y="126.68" width="30.0" height="1.40" fill="#98d098"/><rect x="956.0" y="126.68" width="0.8" height="1.40" fill="#777"/><rect x="916.0" y="128.94" width="4.0" height="1.40" fill="#7f9de6"/><rect x="920.0" y="128.94" width="33.5" height="1.40" fill="#9e9e9e"/><rect x="953.5" y="128.94" width="3.5" height="1.40" fill="#7f9de6"/><rect x="916.0" y="131.19" width="4.0" height="1.40" fill="#7f9de6"/><rect x="920.0" y="131.19" width="34.0" height="1.40" fill="#9e9e9e"/><rect x="954.0" y="131.19" width="3.5" height="1.40" fill="#7f9de6"/><rect x="913.0" y="133.45" width="10.5" height="1.40" fill="#7f9de6"/><rect x="913.2" y="135.70" width="3.5" height="1.40" fill="#7f9de6"/><rect x="918.0" y="135.70" width="2.5" height="1.40" fill="#7f9de6"/><rect x="920.5" y="135.70" width="16.0" height="1.40" fill="#98d098"/><rect x="938.1" y="135.70" width="2.3" height="1.40" fill="#7f9de6"/><rect x="940.4" y="135.70" width="14.0" height="1.40" fill="#98d098"/><rect x="954.3" y="135.70" width="1.3" height="1.40" fill="#888"/><rect x="913.2" y="137.96" width="3.5" height="1.40" fill="#7f9de6"/><rect x="916.7" y="137.96" width="1.3" height="1.40" fill="#b4c4f0"/><rect x="918.0" y="137.96" width="2.5" height="1.40" fill="#7f9de6"/><rect x="920.5" y="137.96" width="23.3" height="1.40" fill="#98d098"/><rect x="943.8" y="137.96" width="5.7" height="1.40" fill="#9e9e9e"/><rect x="949.5" y="137.96" width="3.1" height="1.40" fill="#7f9de6"/><rect x="913.2" y="140.21" width="3.5" height="1.40" fill="#7f9de6"/><rect x="916.7" y="140.21" width="1.3" height="1.40" fill="#b4c4f0"/><rect x="918.0" y="140.21" width="2.5" height="1.40" fill="#7f9de6"/><rect x="920.5" y="140.21" width="25.6" height="1.40" fill="#98d098"/><rect x="946.1" y="140.21" width="5.7" height="1.40" fill="#9e9e9e"/><rect x="951.8" y="140.21" width="2.7" height="1.40" fill="#7f9de6"/><rect x="913.2" y="142.47" width="3.5" height="1.40" fill="#7f9de6"/><rect x="916.7" y="142.47" width="1.3" height="1.40" fill="#b4c4f0"/><rect x="918.0" y="142.47" width="2.5" height="1.40" fill="#7f9de6"/><rect x="920.5" y="142.47" width="24.3" height="1.40" fill="#98d098"/><rect x="944.8" y="142.47" width="5.2" height="1.40" fill="#9e9e9e"/><rect x="949.9" y="142.47" width="2.9" height="1.40" fill="#7f9de6"/><rect x="913.2" y="144.72" width="3.5" height="1.40" fill="#7f9de6"/><rect x="916.7" y="144.72" width="1.3" height="1.40" fill="#b4c4f0"/><rect x="918.0" y="144.72" width="2.5" height="1.40" fill="#7f9de6"/><rect x="920.5" y="144.72" width="23.3" height="1.40" fill="#98d098"/><rect x="943.8" y="144.72" width="5.4" height="1.40" fill="#9e9e9e"/><rect x="949.2" y="144.72" width="3.1" height="1.40" fill="#7f9de6"/><rect x="913.2" y="146.98" width="3.5" height="1.40" fill="#7f9de6"/><rect x="916.7" y="146.98" width="1.3" height="1.40" fill="#b4c4f0"/><rect x="918.0" y="146.98" width="2.5" height="1.40" fill="#7f9de6"/><rect x="920.5" y="146.98" width="21.4" height="1.40" fill="#98d098"/><rect x="941.9" y="146.98" width="6.1" height="1.40" fill="#9e9e9e"/><rect x="948.0" y="146.98" width="3.1" height="1.40" fill="#7f9de6"/><rect x="913.2" y="149.23" width="3.5" height="1.40" fill="#7f9de6"/><rect x="916.7" y="149.23" width="1.3" height="1.40" fill="#b4c4f0"/><rect x="918.0" y="149.23" width="2.5" height="1.40" fill="#7f9de6"/><rect x="920.5" y="149.23" width="36.7" height="1.40" fill="#98d098"/><rect x="957.2" y="149.23" width="6.7" height="1.40" fill="#9e9e9e"/><rect x="963.9" y="149.23" width="2.9" height="1.40" fill="#7f9de6"/><rect x="913.2" y="151.49" width="3.5" height="1.40" fill="#7f9de6"/><rect x="916.7" y="151.49" width="1.3" height="1.40" fill="#b4c4f0"/><rect x="918.0" y="151.49" width="2.5" height="1.40" fill="#7f9de6"/><rect x="920.5" y="151.49" width="24.8" height="1.40" fill="#98d098"/><rect x="945.3" y="151.49" width="6.1" height="1.40" fill="#9e9e9e"/><rect x="951.4" y="151.49" width="3.1" height="1.40" fill="#7f9de6"/><rect x="913.2" y="153.74" width="3.5" height="1.40" fill="#7f9de6"/><rect x="916.7" y="153.74" width="1.3" height="1.40" fill="#b4c4f0"/><rect x="918.0" y="153.74" width="2.5" height="1.40" fill="#7f9de6"/><rect x="920.5" y="153.74" width="21.4" height="1.40" fill="#98d098"/><rect x="941.9" y="153.74" width="5.7" height="1.40" fill="#9e9e9e"/><rect x="947.6" y="153.74" width="3.1" height="1.40" fill="#7f9de6"/><rect x="913.2" y="156.00" width="3.5" height="1.40" fill="#7f9de6"/><rect x="916.7" y="156.00" width="1.3" height="1.40" fill="#b4c4f0"/><rect x="918.0" y="156.00" width="2.5" height="1.40" fill="#7f9de6"/><rect x="920.5" y="156.00" width="18.5" height="1.40" fill="#98d098"/><rect x="939.0" y="156.00" width="6.3" height="1.40" fill="#9e9e9e"/><rect x="945.3" y="156.00" width="2.7" height="1.40" fill="#7f9de6"/><rect x="913.2" y="158.25" width="3.5" height="1.40" fill="#7f9de6"/><rect x="916.7" y="158.25" width="1.3" height="1.40" fill="#b4c4f0"/><rect x="918.0" y="158.25" width="2.5" height="1.40" fill="#7f9de6"/><rect x="920.5" y="158.25" width="18.5" height="1.40" fill="#98d098"/><rect x="939.0" y="158.25" width="6.7" height="1.40" fill="#9e9e9e"/><rect x="945.7" y="158.25" width="3.1" height="1.40" fill="#7f9de6"/><rect x="913.2" y="160.51" width="3.5" height="1.40" fill="#7f9de6"/><rect x="916.7" y="160.51" width="1.3" height="1.40" fill="#b4c4f0"/><rect x="918.0" y="160.51" width="2.5" height="1.40" fill="#7f9de6"/><rect x="920.5" y="160.51" width="25.6" height="1.40" fill="#98d098"/><rect x="946.1" y="160.51" width="5.4" height="1.40" fill="#9e9e9e"/><rect x="951.4" y="160.51" width="3.1" height="1.40" fill="#7f9de6"/><rect x="913.2" y="162.76" width="3.5" height="1.40" fill="#7f9de6"/><rect x="916.7" y="162.76" width="1.3" height="1.40" fill="#b4c4f0"/><rect x="918.0" y="162.76" width="2.5" height="1.40" fill="#7f9de6"/><rect x="920.5" y="162.76" width="27.5" height="1.40" fill="#98d098"/><rect x="948.0" y="162.76" width="6.5" height="1.40" fill="#9e9e9e"/><rect x="954.5" y="162.76" width="3.1" height="1.40" fill="#7f9de6"/><rect x="913.2" y="165.02" width="3.5" height="1.40" fill="#7f9de6"/><rect x="916.7" y="165.02" width="1.3" height="1.40" fill="#b4c4f0"/><rect x="918.0" y="165.02" width="2.5" height="1.40" fill="#7f9de6"/><rect x="920.5" y="165.02" width="21.8" height="1.40" fill="#98d098"/><rect x="942.3" y="165.02" width="6.5" height="1.40" fill="#9e9e9e"/><rect x="948.8" y="165.02" width="3.1" height="1.40" fill="#7f9de6"/><rect x="913.2" y="167.27" width="3.5" height="1.40" fill="#7f9de6"/><rect x="916.7" y="167.27" width="1.3" height="1.40" fill="#b4c4f0"/><rect x="918.0" y="167.27" width="2.5" height="1.40" fill="#7f9de6"/><rect x="920.5" y="167.27" width="19.5" height="1.40" fill="#98d098"/><rect x="940.0" y="167.27" width="6.9" height="1.40" fill="#9e9e9e"/><rect x="946.9" y="167.27" width="2.7" height="1.40" fill="#7f9de6"/><rect x="913.2" y="169.53" width="3.5" height="1.40" fill="#7f9de6"/><rect x="916.7" y="169.53" width="1.3" height="1.40" fill="#b4c4f0"/><rect x="918.0" y="169.53" width="2.5" height="1.40" fill="#7f9de6"/><rect x="920.5" y="169.53" width="18.5" height="1.40" fill="#98d098"/><rect x="939.0" y="169.53" width="5.7" height="1.40" fill="#9e9e9e"/><rect x="944.8" y="169.53" width="2.5" height="1.40" fill="#7f9de6"/><rect x="913.2" y="171.78" width="3.5" height="1.40" fill="#7f9de6"/><rect x="916.7" y="171.78" width="1.3" height="1.40" fill="#b4c4f0"/><rect x="918.0" y="171.78" width="2.5" height="1.40" fill="#7f9de6"/><rect x="920.5" y="171.78" width="45.3" height="1.40" fill="#98d098"/><rect x="965.8" y="171.78" width="6.3" height="1.40" fill="#9e9e9e"/><rect x="972.1" y="171.78" width="2.9" height="1.40" fill="#7f9de6"/><rect x="913.2" y="174.04" width="3.5" height="1.40" fill="#7f9de6"/><rect x="916.7" y="174.04" width="1.3" height="1.40" fill="#b4c4f0"/><rect x="918.0" y="174.04" width="2.5" height="1.40" fill="#7f9de6"/><rect x="920.5" y="174.04" width="24.8" height="1.40" fill="#98d098"/><rect x="945.3" y="174.04" width="6.1" height="1.40" fill="#9e9e9e"/><rect x="951.4" y="174.04" width="2.7" height="1.40" fill="#7f9de6"/><rect x="913.2" y="176.29" width="3.5" height="1.40" fill="#7f9de6"/><rect x="916.7" y="176.29" width="1.3" height="1.40" fill="#b4c4f0"/><rect x="918.0" y="176.29" width="2.5" height="1.40" fill="#7f9de6"/><rect x="920.5" y="176.29" width="33.2" height="1.40" fill="#98d098"/><rect x="953.7" y="176.29" width="6.3" height="1.40" fill="#9e9e9e"/><rect x="960.1" y="176.29" width="2.9" height="1.40" fill="#7f9de6"/><rect x="913.2" y="178.55" width="3.5" height="1.40" fill="#7f9de6"/><rect x="916.7" y="178.55" width="1.3" height="1.40" fill="#b4c4f0"/><rect x="918.0" y="178.55" width="2.5" height="1.40" fill="#7f9de6"/><rect x="920.5" y="178.55" width="44.3" height="1.40" fill="#98d098"/><rect x="964.8" y="178.55" width="5.7" height="1.40" fill="#9e9e9e"/><rect x="970.6" y="178.55" width="2.9" height="1.40" fill="#7f9de6"/><rect x="913.2" y="180.80" width="3.5" height="1.40" fill="#7f9de6"/><rect x="916.7" y="180.80" width="1.3" height="1.40" fill="#b4c4f0"/><rect x="918.0" y="180.80" width="2.5" height="1.40" fill="#7f9de6"/><rect x="920.5" y="180.80" width="26.7" height="1.40" fill="#98d098"/><rect x="947.2" y="180.80" width="6.1" height="1.40" fill="#9e9e9e"/><rect x="953.4" y="180.80" width="2.9" height="1.40" fill="#7f9de6"/><rect x="913.2" y="183.06" width="3.5" height="1.40" fill="#7f9de6"/><rect x="916.7" y="183.06" width="1.3" height="1.40" fill="#b4c4f0"/><rect x="918.0" y="183.06" width="2.5" height="1.40" fill="#7f9de6"/><rect x="920.5" y="183.06" width="30.9" height="1.40" fill="#98d098"/><rect x="951.4" y="183.06" width="5.7" height="1.40" fill="#9e9e9e"/><rect x="957.2" y="183.06" width="2.7" height="1.40" fill="#7f9de6"/><rect x="913.2" y="185.31" width="3.5" height="1.40" fill="#7f9de6"/><rect x="916.7" y="185.31" width="1.3" height="1.40" fill="#b4c4f0"/><rect x="918.0" y="185.31" width="2.5" height="1.40" fill="#7f9de6"/><rect x="920.5" y="185.31" width="28.1" height="1.40" fill="#98d098"/><rect x="948.6" y="185.31" width="6.3" height="1.40" fill="#9e9e9e"/><rect x="954.9" y="185.31" width="2.7" height="1.40" fill="#7f9de6"/><rect x="913.2" y="187.57" width="3.5" height="1.40" fill="#7f9de6"/><rect x="916.7" y="187.57" width="1.3" height="1.40" fill="#b4c4f0"/><rect x="918.0" y="187.57" width="2.5" height="1.40" fill="#7f9de6"/><rect x="920.5" y="187.57" width="26.7" height="1.40" fill="#98d098"/><rect x="947.2" y="187.57" width="6.1" height="1.40" fill="#9e9e9e"/><rect x="953.4" y="187.57" width="3.1" height="1.40" fill="#7f9de6"/><rect x="913.2" y="189.82" width="3.5" height="1.40" fill="#7f9de6"/><rect x="916.7" y="189.82" width="1.3" height="1.40" fill="#b4c4f0"/><rect x="918.0" y="189.82" width="2.5" height="1.40" fill="#7f9de6"/><rect x="920.5" y="189.82" width="20.4" height="1.40" fill="#98d098"/><rect x="940.9" y="189.82" width="5.7" height="1.40" fill="#9e9e9e"/><rect x="946.7" y="189.82" width="2.9" height="1.40" fill="#7f9de6"/><rect x="913.2" y="192.08" width="3.5" height="1.40" fill="#7f9de6"/><rect x="916.7" y="192.08" width="1.3" height="1.40" fill="#b4c4f0"/><rect x="918.0" y="192.08" width="2.5" height="1.40" fill="#7f9de6"/><rect x="920.5" y="192.08" width="14.7" height="1.40" fill="#98d098"/><rect x="935.2" y="192.08" width="6.7" height="1.40" fill="#9e9e9e"/><rect x="941.9" y="192.08" width="2.3" height="1.40" fill="#7f9de6"/><rect x="913.2" y="194.33" width="3.5" height="1.40" fill="#7f9de6"/><rect x="916.7" y="194.33" width="1.3" height="1.40" fill="#b4c4f0"/><rect x="918.0" y="194.33" width="2.5" height="1.40" fill="#7f9de6"/><rect x="920.5" y="194.33" width="17.6" height="1.40" fill="#98d098"/><rect x="938.1" y="194.33" width="19.1" height="1.40" fill="#9e9e9e"/><rect x="957.2" y="194.33" width="3.8" height="1.40" fill="#7f9de6"/><rect x="913.2" y="196.59" width="3.5" height="1.40" fill="#7f9de6"/><rect x="916.7" y="196.59" width="1.3" height="1.40" fill="#b4c4f0"/><rect x="918.0" y="196.59" width="2.5" height="1.40" fill="#7f9de6"/><rect x="920.5" y="196.59" width="17.9" height="1.40" fill="#98d098"/><rect x="938.4" y="196.59" width="19.1" height="1.40" fill="#9e9e9e"/><rect x="957.6" y="196.59" width="4.2" height="1.40" fill="#7f9de6"/><rect x="913.2" y="198.84" width="3.5" height="1.40" fill="#7f9de6"/><rect x="916.7" y="198.84" width="1.3" height="1.40" fill="#b4c4f0"/><rect x="918.0" y="198.84" width="2.5" height="1.40" fill="#7f9de6"/><rect x="920.5" y="198.84" width="17.6" height="1.40" fill="#98d098"/><rect x="938.1" y="198.84" width="19.9" height="1.40" fill="#9e9e9e"/><rect x="958.0" y="198.84" width="4.6" height="1.40" fill="#7f9de6"/><rect x="913.2" y="201.10" width="3.5" height="1.40" fill="#7f9de6"/><rect x="916.7" y="201.10" width="1.3" height="1.40" fill="#b4c4f0"/><rect x="918.0" y="201.10" width="2.5" height="1.40" fill="#7f9de6"/><rect x="920.5" y="201.10" width="17.8" height="1.40" fill="#98d098"/><rect x="938.3" y="201.10" width="19.3" height="1.40" fill="#9e9e9e"/><rect x="957.6" y="201.10" width="4.6" height="1.40" fill="#7f9de6"/><rect x="913.2" y="203.35" width="3.5" height="1.40" fill="#7f9de6"/><rect x="916.7" y="203.35" width="1.3" height="1.40" fill="#b4c4f0"/><rect x="918.0" y="203.35" width="2.5" height="1.40" fill="#7f9de6"/><rect x="920.5" y="203.35" width="17.6" height="1.40" fill="#98d098"/><rect x="938.1" y="203.35" width="19.1" height="1.40" fill="#9e9e9e"/><rect x="957.2" y="203.35" width="4.6" height="1.40" fill="#7f9de6"/><rect x="913.2" y="205.61" width="3.5" height="1.40" fill="#7f9de6"/><rect x="916.7" y="205.61" width="1.3" height="1.40" fill="#b4c4f0"/><rect x="918.0" y="205.61" width="2.5" height="1.40" fill="#7f9de6"/><rect x="920.5" y="205.61" width="17.6" height="1.40" fill="#98d098"/><rect x="938.1" y="205.61" width="18.7" height="1.40" fill="#9e9e9e"/><rect x="956.8" y="205.61" width="4.2" height="1.40" fill="#7f9de6"/><rect x="913.2" y="207.86" width="3.5" height="1.40" fill="#7f9de6"/><rect x="916.7" y="207.86" width="1.3" height="1.40" fill="#b4c4f0"/><rect x="918.0" y="207.86" width="2.5" height="1.40" fill="#7f9de6"/><rect x="920.5" y="207.86" width="17.6" height="1.40" fill="#98d098"/><rect x="938.1" y="207.86" width="18.4" height="1.40" fill="#9e9e9e"/><rect x="956.4" y="207.86" width="4.2" height="1.40" fill="#7f9de6"/><rect x="913.2" y="210.12" width="3.5" height="1.40" fill="#7f9de6"/><rect x="916.7" y="210.12" width="1.3" height="1.40" fill="#b4c4f0"/><rect x="918.0" y="210.12" width="2.5" height="1.40" fill="#7f9de6"/><rect x="920.5" y="210.12" width="17.6" height="1.40" fill="#98d098"/><rect x="938.1" y="210.12" width="18.4" height="1.40" fill="#9e9e9e"/><rect x="956.4" y="210.12" width="4.2" height="1.40" fill="#7f9de6"/><rect x="913.2" y="212.37" width="3.5" height="1.40" fill="#7f9de6"/><rect x="916.7" y="212.37" width="1.3" height="1.40" fill="#b4c4f0"/><rect x="918.0" y="212.37" width="2.5" height="1.40" fill="#7f9de6"/><rect x="920.5" y="212.37" width="17.6" height="1.40" fill="#98d098"/><rect x="938.1" y="212.37" width="18.4" height="1.40" fill="#9e9e9e"/><rect x="956.4" y="212.37" width="4.2" height="1.40" fill="#7f9de6"/><rect x="913.2" y="214.63" width="3.5" height="1.40" fill="#7f9de6"/><rect x="916.7" y="214.63" width="1.3" height="1.40" fill="#b4c4f0"/><rect x="918.0" y="214.63" width="2.5" height="1.40" fill="#7f9de6"/><rect x="920.5" y="214.63" width="17.6" height="1.40" fill="#98d098"/><rect x="938.1" y="214.63" width="18.4" height="1.40" fill="#9e9e9e"/><rect x="956.4" y="214.63" width="4.2" height="1.40" fill="#7f9de6"/><rect x="913.2" y="216.88" width="3.5" height="1.40" fill="#7f9de6"/><rect x="916.7" y="216.88" width="1.3" height="1.40" fill="#b4c4f0"/><rect x="918.0" y="216.88" width="2.5" height="1.40" fill="#7f9de6"/><rect x="920.5" y="216.88" width="17.6" height="1.40" fill="#98d098"/><rect x="938.1" y="216.88" width="18.4" height="1.40" fill="#9e9e9e"/><rect x="956.4" y="216.88" width="4.2" height="1.40" fill="#7f9de6"/><rect x="913.2" y="219.14" width="3.5" height="1.40" fill="#7f9de6"/><rect x="916.7" y="219.14" width="1.3" height="1.40" fill="#b4c4f0"/><rect x="918.0" y="219.14" width="2.5" height="1.40" fill="#7f9de6"/><rect x="920.5" y="219.14" width="15.7" height="1.40" fill="#98d098"/><rect x="936.2" y="219.14" width="17.2" height="1.40" fill="#9e9e9e"/><rect x="953.4" y="219.14" width="2.9" height="1.40" fill="#7f9de6"/><rect x="913.2" y="221.39" width="3.5" height="1.40" fill="#7f9de6"/><rect x="916.7" y="221.39" width="1.3" height="1.40" fill="#b4c4f0"/><rect x="918.0" y="221.39" width="2.5" height="1.40" fill="#7f9de6"/><rect x="920.5" y="221.39" width="30.9" height="1.40" fill="#98d098"/><rect x="951.4" y="221.39" width="24.9" height="1.40" fill="#9e9e9e"/><rect x="976.3" y="221.39" width="3.8" height="1.40" fill="#7f9de6"/><rect x="913.2" y="223.65" width="3.5" height="1.40" fill="#7f9de6"/><rect x="916.7" y="223.65" width="1.3" height="1.40" fill="#b4c4f0"/><rect x="918.0" y="223.65" width="2.5" height="1.40" fill="#7f9de6"/><rect x="920.5" y="223.65" width="15.3" height="1.40" fill="#98d098"/><rect x="935.8" y="223.65" width="19.5" height="1.40" fill="#9e9e9e"/><rect x="955.3" y="223.65" width="3.1" height="1.40" fill="#7f9de6"/><rect x="913.2" y="225.90" width="3.5" height="1.40" fill="#7f9de6"/><rect x="916.7" y="225.90" width="1.3" height="1.40" fill="#b4c4f0"/><rect x="918.0" y="225.90" width="2.5" height="1.40" fill="#7f9de6"/><rect x="920.5" y="225.90" width="19.5" height="1.40" fill="#98d098"/><rect x="940.0" y="225.90" width="25.8" height="1.40" fill="#9e9e9e"/><rect x="965.8" y="225.90" width="3.8" height="1.40" fill="#7f9de6"/><rect x="913.2" y="228.16" width="3.5" height="1.40" fill="#7f9de6"/><rect x="916.7" y="228.16" width="1.3" height="1.40" fill="#b4c4f0"/><rect x="918.0" y="228.16" width="2.5" height="1.40" fill="#7f9de6"/><rect x="920.5" y="228.16" width="24.3" height="1.40" fill="#98d098"/><rect x="944.8" y="228.16" width="19.1" height="1.40" fill="#9e9e9e"/><rect x="963.9" y="228.16" width="3.8" height="1.40" fill="#7f9de6"/><rect x="913.2" y="230.41" width="3.5" height="1.40" fill="#7f9de6"/><rect x="916.7" y="230.41" width="1.3" height="1.40" fill="#b4c4f0"/><rect x="918.0" y="230.41" width="2.5" height="1.40" fill="#7f9de6"/><rect x="920.5" y="230.41" width="24.8" height="1.40" fill="#98d098"/><rect x="945.3" y="230.41" width="19.5" height="1.40" fill="#9e9e9e"/><rect x="964.8" y="230.41" width="3.4" height="1.40" fill="#7f9de6"/><rect x="913.2" y="232.67" width="3.5" height="1.40" fill="#7f9de6"/><rect x="916.7" y="232.67" width="1.3" height="1.40" fill="#b4c4f0"/><rect x="918.0" y="232.67" width="2.5" height="1.40" fill="#7f9de6"/><rect x="920.5" y="232.67" width="21.0" height="1.40" fill="#98d098"/><rect x="941.5" y="232.67" width="18.5" height="1.40" fill="#9e9e9e"/><rect x="960.1" y="232.67" width="4.0" height="1.40" fill="#7f9de6"/><rect x="913.2" y="234.92" width="3.5" height="1.40" fill="#7f9de6"/><rect x="916.7" y="234.92" width="1.3" height="1.40" fill="#b4c4f0"/><rect x="918.0" y="234.92" width="2.5" height="1.40" fill="#7f9de6"/><rect x="920.5" y="234.92" width="21.0" height="1.40" fill="#98d098"/><rect x="941.5" y="234.92" width="17.6" height="1.40" fill="#9e9e9e"/><rect x="959.1" y="234.92" width="3.8" height="1.40" fill="#7f9de6"/><rect x="913.2" y="237.18" width="3.5" height="1.40" fill="#7f9de6"/><rect x="916.7" y="237.18" width="1.3" height="1.40" fill="#b4c4f0"/><rect x="918.0" y="237.18" width="2.5" height="1.40" fill="#7f9de6"/><rect x="920.5" y="237.18" width="21.4" height="1.40" fill="#98d098"/><rect x="941.9" y="237.18" width="18.2" height="1.40" fill="#9e9e9e"/><rect x="960.1" y="237.18" width="4.4" height="1.40" fill="#7f9de6"/><rect x="913.2" y="239.43" width="3.5" height="1.40" fill="#7f9de6"/><rect x="916.7" y="239.43" width="1.3" height="1.40" fill="#b4c4f0"/><rect x="918.0" y="239.43" width="2.5" height="1.40" fill="#7f9de6"/><rect x="920.5" y="239.43" width="20.4" height="1.40" fill="#98d098"/><rect x="940.9" y="239.43" width="18.5" height="1.40" fill="#9e9e9e"/><rect x="959.5" y="239.43" width="3.4" height="1.40" fill="#7f9de6"/><rect x="913.2" y="241.69" width="3.5" height="1.40" fill="#7f9de6"/><rect x="916.7" y="241.69" width="1.3" height="1.40" fill="#b4c4f0"/><rect x="918.0" y="241.69" width="2.5" height="1.40" fill="#7f9de6"/><rect x="920.5" y="241.69" width="19.9" height="1.40" fill="#98d098"/><rect x="940.4" y="241.69" width="18.7" height="1.40" fill="#9e9e9e"/><rect x="959.1" y="241.69" width="4.2" height="1.40" fill="#7f9de6"/><rect x="913.2" y="243.94" width="3.5" height="1.40" fill="#7f9de6"/><rect x="916.7" y="243.94" width="1.3" height="1.40" fill="#b4c4f0"/><rect x="918.0" y="243.94" width="2.5" height="1.40" fill="#7f9de6"/><rect x="920.5" y="243.94" width="21.0" height="1.40" fill="#98d098"/><rect x="941.5" y="243.94" width="25.6" height="1.40" fill="#9e9e9e"/><rect x="967.1" y="243.94" width="3.8" height="1.40" fill="#7f9de6"/><rect x="913.2" y="246.20" width="3.5" height="1.40" fill="#7f9de6"/><rect x="916.7" y="246.20" width="1.3" height="1.40" fill="#b4c4f0"/><rect x="918.0" y="246.20" width="2.5" height="1.40" fill="#7f9de6"/><rect x="920.5" y="246.20" width="27.1" height="1.40" fill="#98d098"/><rect x="947.6" y="246.20" width="24.9" height="1.40" fill="#9e9e9e"/><rect x="972.5" y="246.20" width="3.8" height="1.40" fill="#7f9de6"/><rect x="913.2" y="248.45" width="3.5" height="1.40" fill="#7f9de6"/><rect x="916.7" y="248.45" width="1.3" height="1.40" fill="#b4c4f0"/><rect x="918.0" y="248.45" width="2.5" height="1.40" fill="#7f9de6"/><rect x="920.5" y="248.45" width="29.4" height="1.40" fill="#98d098"/><rect x="949.9" y="248.45" width="18.7" height="1.40" fill="#9e9e9e"/><rect x="968.7" y="248.45" width="3.8" height="1.40" fill="#7f9de6"/><rect x="913.2" y="250.71" width="3.5" height="1.40" fill="#7f9de6"/><rect x="916.7" y="250.71" width="1.3" height="1.40" fill="#b4c4f0"/><rect x="918.0" y="250.71" width="2.5" height="1.40" fill="#7f9de6"/><rect x="920.5" y="250.71" width="35.7" height="1.40" fill="#98d098"/><rect x="956.2" y="250.71" width="18.2" height="1.40" fill="#9e9e9e"/><rect x="974.4" y="250.71" width="4.2" height="1.40" fill="#7f9de6"/><rect x="913.2" y="252.96" width="3.5" height="1.40" fill="#7f9de6"/><rect x="916.7" y="252.96" width="1.3" height="1.40" fill="#b4c4f0"/><rect x="918.0" y="252.96" width="2.5" height="1.40" fill="#7f9de6"/><rect x="920.5" y="252.96" width="33.8" height="1.40" fill="#98d098"/><rect x="954.3" y="252.96" width="19.1" height="1.40" fill="#9e9e9e"/><rect x="973.4" y="252.96" width="3.8" height="1.40" fill="#7f9de6"/><rect x="913.2" y="255.22" width="3.5" height="1.40" fill="#7f9de6"/><rect x="916.7" y="255.22" width="1.3" height="1.40" fill="#b4c4f0"/><rect x="918.0" y="255.22" width="2.5" height="1.40" fill="#7f9de6"/><rect x="920.5" y="255.22" width="40.5" height="1.40" fill="#98d098"/><rect x="961.0" y="255.22" width="24.9" height="1.40" fill="#9e9e9e"/><rect x="985.9" y="255.22" width="3.8" height="1.40" fill="#7f9de6"/><rect x="913.2" y="257.47" width="3.5" height="1.40" fill="#7f9de6"/><rect x="916.7" y="257.47" width="1.3" height="1.40" fill="#b4c4f0"/><rect x="918.0" y="257.47" width="2.5" height="1.40" fill="#7f9de6"/><rect x="920.5" y="257.47" width="39.6" height="1.40" fill="#98d098"/><rect x="960.1" y="257.47" width="19.1" height="1.40" fill="#9e9e9e"/><rect x="979.2" y="257.47" width="4.4" height="1.40" fill="#7f9de6"/><rect x="913.2" y="259.73" width="3.5" height="1.40" fill="#7f9de6"/><rect x="916.7" y="259.73" width="1.3" height="1.40" fill="#b4c4f0"/><rect x="918.0" y="259.73" width="2.5" height="1.40" fill="#7f9de6"/><rect x="920.5" y="259.73" width="27.5" height="1.40" fill="#98d098"/><rect x="948.0" y="259.73" width="20.3" height="1.40" fill="#9e9e9e"/><rect x="968.3" y="259.73" width="3.4" height="1.40" fill="#7f9de6"/><rect x="913.2" y="261.98" width="3.5" height="1.40" fill="#7f9de6"/><rect x="916.7" y="261.98" width="1.3" height="1.40" fill="#b4c4f0"/><rect x="918.0" y="261.98" width="2.5" height="1.40" fill="#7f9de6"/><rect x="920.5" y="261.98" width="33.2" height="1.40" fill="#98d098"/><rect x="953.7" y="261.98" width="19.1" height="1.40" fill="#9e9e9e"/><rect x="972.9" y="261.98" width="4.4" height="1.40" fill="#7f9de6"/><rect x="913.2" y="264.24" width="3.5" height="1.40" fill="#7f9de6"/><rect x="916.7" y="264.24" width="1.3" height="1.40" fill="#b4c4f0"/><rect x="918.0" y="264.24" width="2.5" height="1.40" fill="#7f9de6"/><rect x="920.5" y="264.24" width="33.2" height="1.40" fill="#98d098"/><rect x="953.7" y="264.24" width="18.7" height="1.40" fill="#9e9e9e"/><rect x="972.5" y="264.24" width="3.8" height="1.40" fill="#7f9de6"/><rect x="913.2" y="266.49" width="3.5" height="1.40" fill="#7f9de6"/><rect x="916.7" y="266.49" width="1.3" height="1.40" fill="#b4c4f0"/><rect x="918.0" y="266.49" width="2.5" height="1.40" fill="#7f9de6"/><rect x="920.5" y="266.49" width="18.5" height="1.40" fill="#98d098"/><rect x="939.0" y="266.49" width="22.9" height="1.40" fill="#9e9e9e"/><rect x="962.0" y="266.49" width="3.8" height="1.40" fill="#7f9de6"/><rect x="913.2" y="268.75" width="3.5" height="1.40" fill="#7f9de6"/><rect x="916.7" y="268.75" width="1.3" height="1.40" fill="#b4c4f0"/><rect x="918.0" y="268.75" width="2.5" height="1.40" fill="#7f9de6"/><rect x="920.5" y="268.75" width="17.9" height="1.40" fill="#98d098"/><rect x="938.4" y="268.75" width="26.0" height="1.40" fill="#9e9e9e"/><rect x="964.5" y="268.75" width="3.8" height="1.40" fill="#7f9de6"/><rect x="913.2" y="271.00" width="3.5" height="1.40" fill="#7f9de6"/><rect x="916.7" y="271.00" width="1.3" height="1.40" fill="#b4c4f0"/><rect x="918.0" y="271.00" width="2.5" height="1.40" fill="#7f9de6"/><rect x="920.5" y="271.00" width="15.7" height="1.40" fill="#98d098"/><rect x="936.2" y="271.00" width="18.2" height="1.40" fill="#9e9e9e"/><rect x="954.3" y="271.00" width="3.8" height="1.40" fill="#7f9de6"/><rect x="913.2" y="273.26" width="3.5" height="1.40" fill="#7f9de6"/><rect x="916.7" y="273.26" width="1.3" height="1.40" fill="#b4c4f0"/><rect x="918.0" y="273.26" width="2.5" height="1.40" fill="#7f9de6"/><rect x="920.5" y="273.26" width="12.8" height="1.40" fill="#98d098"/><rect x="933.3" y="273.26" width="25.8" height="1.40" fill="#9e9e9e"/><rect x="959.1" y="273.26" width="3.4" height="1.40" fill="#7f9de6"/><rect x="913.2" y="275.51" width="3.5" height="1.40" fill="#7f9de6"/><rect x="916.7" y="275.51" width="1.3" height="1.40" fill="#b4c4f0"/><rect x="918.0" y="275.51" width="2.5" height="1.40" fill="#7f9de6"/><rect x="920.5" y="275.51" width="14.7" height="1.40" fill="#98d098"/><rect x="935.2" y="275.51" width="18.5" height="1.40" fill="#9e9e9e"/><rect x="953.7" y="275.51" width="3.8" height="1.40" fill="#7f9de6"/><rect x="913.2" y="277.77" width="3.5" height="1.40" fill="#7f9de6"/><rect x="916.7" y="277.77" width="1.3" height="1.40" fill="#b4c4f0"/><rect x="918.0" y="277.77" width="2.5" height="1.40" fill="#7f9de6"/><rect x="920.5" y="277.77" width="18.5" height="1.40" fill="#98d098"/><rect x="939.0" y="277.77" width="24.3" height="1.40" fill="#9e9e9e"/><rect x="963.3" y="277.77" width="3.8" height="1.40" fill="#7f9de6"/><rect x="913.2" y="280.02" width="3.5" height="1.40" fill="#7f9de6"/><rect x="916.7" y="280.02" width="1.3" height="1.40" fill="#b4c4f0"/><rect x="918.0" y="280.02" width="2.5" height="1.40" fill="#7f9de6"/><rect x="920.5" y="280.02" width="19.5" height="1.40" fill="#98d098"/><rect x="940.0" y="280.02" width="19.5" height="1.40" fill="#9e9e9e"/><rect x="959.5" y="280.02" width="3.4" height="1.40" fill="#7f9de6"/><rect x="913.2" y="282.28" width="3.5" height="1.40" fill="#7f9de6"/><rect x="916.7" y="282.28" width="1.3" height="1.40" fill="#b4c4f0"/><rect x="918.0" y="282.28" width="2.5" height="1.40" fill="#7f9de6"/><rect x="920.5" y="282.28" width="16.6" height="1.40" fill="#98d098"/><rect x="937.1" y="282.28" width="24.9" height="1.40" fill="#9e9e9e"/><rect x="962.0" y="282.28" width="3.3" height="1.40" fill="#7f9de6"/><rect x="913.2" y="284.53" width="3.5" height="1.40" fill="#7f9de6"/><rect x="916.7" y="284.53" width="1.3" height="1.40" fill="#b4c4f0"/><rect x="918.0" y="284.53" width="2.5" height="1.40" fill="#7f9de6"/><rect x="920.5" y="284.53" width="11.8" height="1.40" fill="#98d098"/><rect x="932.3" y="284.53" width="18.2" height="1.40" fill="#9e9e9e"/><rect x="950.5" y="284.53" width="3.8" height="1.40" fill="#7f9de6"/><rect x="913.2" y="286.79" width="3.5" height="1.40" fill="#7f9de6"/><rect x="916.7" y="286.79" width="1.3" height="1.40" fill="#b4c4f0"/><rect x="918.0" y="286.79" width="2.5" height="1.40" fill="#7f9de6"/><rect x="920.5" y="286.79" width="17.9" height="1.40" fill="#98d098"/><rect x="938.4" y="286.79" width="19.1" height="1.40" fill="#9e9e9e"/><rect x="957.6" y="286.79" width="3.8" height="1.40" fill="#7f9de6"/><rect x="913.2" y="289.04" width="3.5" height="1.40" fill="#7f9de6"/><rect x="916.7" y="289.04" width="1.3" height="1.40" fill="#b4c4f0"/><rect x="918.0" y="289.04" width="2.5" height="1.40" fill="#7f9de6"/><rect x="920.5" y="289.04" width="21.4" height="1.40" fill="#98d098"/><rect x="941.9" y="289.04" width="19.1" height="1.40" fill="#9e9e9e"/><rect x="961.0" y="289.04" width="3.4" height="1.40" fill="#7f9de6"/><rect x="913.2" y="291.30" width="3.5" height="1.40" fill="#7f9de6"/><rect x="916.7" y="291.30" width="1.3" height="1.40" fill="#b4c4f0"/><rect x="918.0" y="291.30" width="2.5" height="1.40" fill="#7f9de6"/><rect x="920.5" y="291.30" width="21.0" height="1.40" fill="#98d098"/><rect x="941.5" y="291.30" width="16.1" height="1.40" fill="#9e9e9e"/><rect x="957.6" y="291.30" width="3.8" height="1.40" fill="#7f9de6"/><rect x="913.2" y="293.55" width="3.5" height="1.40" fill="#7f9de6"/><rect x="916.7" y="293.55" width="1.3" height="1.40" fill="#b4c4f0"/><rect x="918.0" y="293.55" width="2.5" height="1.40" fill="#7f9de6"/><rect x="920.5" y="293.55" width="21.8" height="1.40" fill="#98d098"/><rect x="942.3" y="293.55" width="18.7" height="1.40" fill="#9e9e9e"/><rect x="961.0" y="293.55" width="3.4" height="1.40" fill="#7f9de6"/><rect x="913.2" y="295.81" width="3.5" height="1.40" fill="#7f9de6"/><rect x="916.7" y="295.81" width="1.3" height="1.40" fill="#b4c4f0"/><rect x="918.0" y="295.81" width="2.5" height="1.40" fill="#7f9de6"/><rect x="920.5" y="295.81" width="19.5" height="1.40" fill="#98d098"/><rect x="940.0" y="295.81" width="19.1" height="1.40" fill="#9e9e9e"/><rect x="959.1" y="295.81" width="3.4" height="1.40" fill="#7f9de6"/><rect x="913.2" y="298.06" width="3.5" height="1.40" fill="#7f9de6"/><rect x="916.7" y="298.06" width="1.3" height="1.40" fill="#b4c4f0"/><rect x="918.0" y="298.06" width="2.5" height="1.40" fill="#7f9de6"/><rect x="920.5" y="298.06" width="27.1" height="1.40" fill="#98d098"/><rect x="947.6" y="298.06" width="20.1" height="1.40" fill="#9e9e9e"/><rect x="967.7" y="298.06" width="3.3" height="1.40" fill="#7f9de6"/><rect x="913.2" y="300.32" width="3.5" height="1.40" fill="#7f9de6"/><rect x="916.7" y="300.32" width="1.3" height="1.40" fill="#b4c4f0"/><rect x="918.0" y="300.32" width="2.5" height="1.40" fill="#7f9de6"/><rect x="920.5" y="300.32" width="32.5" height="1.40" fill="#98d098"/><rect x="953.0" y="300.32" width="19.5" height="1.40" fill="#9e9e9e"/><rect x="972.5" y="300.32" width="3.8" height="1.40" fill="#7f9de6"/><rect x="913.2" y="302.57" width="3.5" height="1.40" fill="#7f9de6"/><rect x="916.7" y="302.57" width="1.3" height="1.40" fill="#b4c4f0"/><rect x="918.0" y="302.57" width="2.5" height="1.40" fill="#7f9de6"/><rect x="920.5" y="302.57" width="25.6" height="1.40" fill="#98d098"/><rect x="946.1" y="302.57" width="17.8" height="1.40" fill="#9e9e9e"/><rect x="963.9" y="302.57" width="3.8" height="1.40" fill="#7f9de6"/><rect x="913.2" y="304.83" width="3.5" height="1.40" fill="#7f9de6"/><rect x="916.7" y="304.83" width="1.3" height="1.40" fill="#b4c4f0"/><rect x="918.0" y="304.83" width="2.5" height="1.40" fill="#7f9de6"/><rect x="920.5" y="304.83" width="21.4" height="1.40" fill="#98d098"/><rect x="941.9" y="304.83" width="22.0" height="1.40" fill="#9e9e9e"/><rect x="963.9" y="304.83" width="3.8" height="1.40" fill="#7f9de6"/><rect x="913.2" y="307.08" width="3.5" height="1.40" fill="#7f9de6"/><rect x="916.7" y="307.08" width="1.3" height="1.40" fill="#b4c4f0"/><rect x="918.0" y="307.08" width="2.5" height="1.40" fill="#7f9de6"/><rect x="920.5" y="307.08" width="15.7" height="1.40" fill="#98d098"/><rect x="936.2" y="307.08" width="19.1" height="1.40" fill="#9e9e9e"/><rect x="955.3" y="307.08" width="3.4" height="1.40" fill="#7f9de6"/><rect x="913.2" y="309.34" width="3.5" height="1.40" fill="#7f9de6"/><rect x="916.7" y="309.34" width="1.3" height="1.40" fill="#b4c4f0"/><rect x="918.0" y="309.34" width="2.5" height="1.40" fill="#7f9de6"/><rect x="920.5" y="309.34" width="17.2" height="1.40" fill="#98d098"/><rect x="937.7" y="309.34" width="24.9" height="1.40" fill="#9e9e9e"/><rect x="962.5" y="309.34" width="3.3" height="1.40" fill="#7f9de6"/><rect x="913.2" y="311.59" width="3.5" height="1.40" fill="#7f9de6"/><rect x="916.7" y="311.59" width="1.3" height="1.40" fill="#b4c4f0"/><rect x="918.0" y="311.59" width="2.5" height="1.40" fill="#7f9de6"/><rect x="920.5" y="311.59" width="21.4" height="1.40" fill="#98d098"/><rect x="941.9" y="311.59" width="19.1" height="1.40" fill="#9e9e9e"/><rect x="961.0" y="311.59" width="3.8" height="1.40" fill="#7f9de6"/><rect x="913.2" y="313.85" width="3.5" height="1.40" fill="#7f9de6"/><rect x="916.7" y="313.85" width="1.3" height="1.40" fill="#b4c4f0"/><rect x="918.0" y="313.85" width="2.5" height="1.40" fill="#7f9de6"/><rect x="920.5" y="313.85" width="21.4" height="1.40" fill="#98d098"/><rect x="941.9" y="313.85" width="19.5" height="1.40" fill="#9e9e9e"/><rect x="961.4" y="313.85" width="3.8" height="1.40" fill="#7f9de6"/><rect x="913.2" y="316.10" width="3.5" height="1.40" fill="#7f9de6"/><rect x="916.7" y="316.10" width="1.3" height="1.40" fill="#b4c4f0"/><rect x="918.0" y="316.10" width="2.5" height="1.40" fill="#7f9de6"/><rect x="920.5" y="316.10" width="20.4" height="1.40" fill="#98d098"/><rect x="940.9" y="316.10" width="19.1" height="1.40" fill="#9e9e9e"/><rect x="960.1" y="316.10" width="3.8" height="1.40" fill="#7f9de6"/><rect x="913.2" y="318.36" width="3.5" height="1.40" fill="#7f9de6"/><rect x="916.7" y="318.36" width="1.3" height="1.40" fill="#b4c4f0"/><rect x="918.0" y="318.36" width="2.5" height="1.40" fill="#7f9de6"/><rect x="920.5" y="318.36" width="21.4" height="1.40" fill="#98d098"/><rect x="941.9" y="318.36" width="19.1" height="1.40" fill="#9e9e9e"/><rect x="961.0" y="318.36" width="3.4" height="1.40" fill="#7f9de6"/><rect x="913.2" y="320.61" width="3.5" height="1.40" fill="#7f9de6"/><rect x="916.7" y="320.61" width="1.3" height="1.40" fill="#b4c4f0"/><rect x="918.0" y="320.61" width="2.5" height="1.40" fill="#7f9de6"/><rect x="920.5" y="320.61" width="22.3" height="1.40" fill="#98d098"/><rect x="942.8" y="320.61" width="22.0" height="1.40" fill="#9e9e9e"/><rect x="964.8" y="320.61" width="3.8" height="1.40" fill="#7f9de6"/><rect x="913.2" y="322.87" width="3.5" height="1.40" fill="#7f9de6"/><rect x="916.7" y="322.87" width="1.3" height="1.40" fill="#b4c4f0"/><rect x="918.0" y="322.87" width="2.5" height="1.40" fill="#7f9de6"/><rect x="920.5" y="322.87" width="22.3" height="1.40" fill="#98d098"/><rect x="942.8" y="322.87" width="21.6" height="1.40" fill="#9e9e9e"/><rect x="964.5" y="322.87" width="3.8" height="1.40" fill="#7f9de6"/><rect x="913.2" y="325.12" width="3.5" height="1.40" fill="#7f9de6"/><rect x="916.7" y="325.12" width="1.3" height="1.40" fill="#b4c4f0"/><rect x="918.0" y="325.12" width="2.5" height="1.40" fill="#7f9de6"/><rect x="920.5" y="325.12" width="26.2" height="1.40" fill="#98d098"/><rect x="946.7" y="325.12" width="19.1" height="1.40" fill="#9e9e9e"/><rect x="965.8" y="325.12" width="3.8" height="1.40" fill="#7f9de6"/><rect x="913.2" y="327.38" width="3.5" height="1.40" fill="#7f9de6"/><rect x="916.7" y="327.38" width="1.3" height="1.40" fill="#b4c4f0"/><rect x="918.0" y="327.38" width="2.5" height="1.40" fill="#7f9de6"/><rect x="920.5" y="327.38" width="17.6" height="1.40" fill="#98d098"/><rect x="938.1" y="327.38" width="22.0" height="1.40" fill="#9e9e9e"/><rect x="960.1" y="327.38" width="3.3" height="1.40" fill="#7f9de6"/><rect x="913.2" y="329.63" width="3.5" height="1.40" fill="#7f9de6"/><rect x="916.7" y="329.63" width="1.3" height="1.40" fill="#b4c4f0"/><rect x="918.0" y="329.63" width="2.5" height="1.40" fill="#7f9de6"/><rect x="920.5" y="329.63" width="20.4" height="1.40" fill="#98d098"/><rect x="940.9" y="329.63" width="21.0" height="1.40" fill="#9e9e9e"/><rect x="962.0" y="329.63" width="3.8" height="1.40" fill="#7f9de6"/><rect x="913.2" y="331.89" width="3.5" height="1.40" fill="#7f9de6"/><rect x="916.7" y="331.89" width="1.3" height="1.40" fill="#b4c4f0"/><rect x="918.0" y="331.89" width="2.5" height="1.40" fill="#7f9de6"/><rect x="920.5" y="331.89" width="14.7" height="1.40" fill="#98d098"/><rect x="935.2" y="331.89" width="22.0" height="1.40" fill="#9e9e9e"/><rect x="957.2" y="331.89" width="3.4" height="1.40" fill="#7f9de6"/><rect x="913.2" y="334.14" width="3.5" height="1.40" fill="#7f9de6"/><rect x="916.7" y="334.14" width="1.3" height="1.40" fill="#b4c4f0"/><rect x="918.0" y="334.14" width="2.5" height="1.40" fill="#7f9de6"/><rect x="920.5" y="334.14" width="15.7" height="1.40" fill="#98d098"/><rect x="936.2" y="334.14" width="20.1" height="1.40" fill="#9e9e9e"/><rect x="956.2" y="334.14" width="3.8" height="1.40" fill="#7f9de6"/><rect x="913.2" y="336.40" width="3.5" height="1.40" fill="#7f9de6"/><rect x="916.7" y="336.40" width="1.3" height="1.40" fill="#b4c4f0"/><rect x="918.0" y="336.40" width="2.5" height="1.40" fill="#7f9de6"/><rect x="920.5" y="336.40" width="28.7" height="1.40" fill="#98d098"/><rect x="949.2" y="336.40" width="19.1" height="1.40" fill="#9e9e9e"/><rect x="968.3" y="336.40" width="3.4" height="1.40" fill="#7f9de6"/></svg>
<div class="b" style="left:328.00px;top:339.00px;width:680.00px;height:18.00px;background:#f2f2f2;"></div>
<div class="b" style="left:328.00px;top:339.00px;width:680.00px;height:1.00px;background:#dcdcdc;"></div>
<span class="t " style="left:387.00px;top:341.50px;line-height:14px;font-size:8.90px;color:#555;transform:scaleX(0.9469);">resources</span>
<div class="b" style="left:328.00px;top:356.00px;width:680.00px;height:1.00px;background:#d1d1d1;"></div>
<div class="b" style="left:327.00px;top:43.00px;width:681.00px;height:19.00px;background:#f2f2f2;"></div>
<div class="b" style="left:327.00px;top:43.00px;width:1.00px;height:314.00px;background:#d1d1d1;"></div>
<div class="b" style="left:328.00px;top:43.00px;width:207.00px;height:19.00px;background:#f1f0dc;"></div>
<div class="b" style="left:606.00px;top:43.00px;width:240.00px;height:19.00px;background:#fffdec;"></div>
<div class="b" style="left:328.00px;top:62.00px;width:680.00px;height:1.00px;background:#d1d1d1;"></div>
<div class="b" style="left:606.00px;top:59.80px;width:240.00px;height:2.80px;background:#3574c8;"></div>
<span class="t " style="left:328.30px;top:45.70px;line-height:14px;font-size:8.90px;color:#000;transform:scaleX(0.9608);">6b333344f3af2092eb641c5c617a0e\...\values.xml</span>
<svg class="b" style="left:522.50px;top:49.00px;" width="7" height="7" viewBox="0 0 7 7"><path d="M1 1 L6 6 M6 1 L1 6" stroke="#b0b0b0" stroke-width="0.9"/></svg>
<svg class="b" style="left:541.50px;top:47.00px;" width="11" height="11" viewBox="0 0 12 12"><rect x="0" y="6" width="11.8" height="4.6" fill="#f0884a"/><path d="M3.6 7.2 L2.3 8.3 L3.6 9.4 M6.6 7.2 L7.9 8.3 L6.6 9.4" stroke="#4a3226" stroke-width="0.85" fill="none"/><path d="M2 5 V2.8 L4.6 0.3 H9 V5 Z" fill="#a9b3bb"/><path d="M2 2.8 L4.6 0.3 V2.8 Z" fill="#d5dade"/><path d="M6.2 0.6 V4.6 M7.8 0.6 V4.6" stroke="#e9ecee" stroke-width="0.5"/></svg>
<span class="t " style="left:555.00px;top:45.70px;line-height:14px;font-size:8.90px;color:#000;transform:scaleX(1.0113);">attrs.xml</span>
<svg class="b" style="left:594.50px;top:49.00px;" width="7" height="7" viewBox="0 0 7 7"><path d="M1 1 L6 6 M6 1 L1 6" stroke="#b0b0b0" stroke-width="0.9"/></svg>
<svg class="b" style="left:612.00px;top:47.00px;" width="11" height="11" viewBox="0 0 12 12"><rect x="0" y="6" width="11.8" height="4.6" fill="#f0884a"/><path d="M3.6 7.2 L2.3 8.3 L3.6 9.4 M6.6 7.2 L7.9 8.3 L6.6 9.4" stroke="#4a3226" stroke-width="0.85" fill="none"/><path d="M2 5 V2.8 L4.6 0.3 H9 V5 Z" fill="#a9b3bb"/><path d="M2 2.8 L4.6 0.3 V2.8 Z" fill="#d5dade"/><path d="M6.2 0.6 V4.6 M7.8 0.6 V4.6" stroke="#e9ecee" stroke-width="0.5"/></svg>
<span class="t " style="left:627.00px;top:45.70px;line-height:14px;font-size:8.90px;color:#000;transform:scaleX(0.9560);">ab64ab389a1ce4a1a091cc31ca2a905a\...\values.xml</span>
<svg class="b" style="left:833.00px;top:49.00px;" width="7" height="7" viewBox="0 0 7 7"><path d="M1 1 L6 6 M6 1 L1 6" stroke="#b0b0b0" stroke-width="0.9"/></svg>
<svg class="b" style="left:851.50px;top:47.00px;" width="11" height="11" viewBox="0 0 12 12"><rect x="0" y="6" width="11.8" height="4.6" fill="#f0884a"/><path d="M3.6 7.2 L2.3 8.3 L3.6 9.4 M6.6 7.2 L7.9 8.3 L6.6 9.4" stroke="#4a3226" stroke-width="0.85" fill="none"/><path d="M2 5 V2.8 L4.6 0.3 H9 V5 Z" fill="#a9b3bb"/><path d="M2 2.8 L4.6 0.3 V2.8 Z" fill="#d5dade"/><path d="M6.2 0.6 V4.6 M7.8 0.6 V4.6" stroke="#e9ecee" stroke-width="0.5"/></svg>
<span class="t " style="left:866.40px;top:45.70px;line-height:14px;font-size:8.90px;color:#000;transform:scaleX(1.0244);">dimens.xml</span>
<svg class="b" style="left:917.00px;top:49.00px;" width="7" height="7" viewBox="0 0 7 7"><path d="M1 1 L6 6 M6 1 L1 6" stroke="#b0b0b0" stroke-width="0.9"/></svg>
<svg class="b" style="left:935.00px;top:47.00px;" width="11" height="11" viewBox="0 0 12 12"><rect x="0" y="6" width="11.8" height="4.6" fill="#f0884a"/><path d="M3.6 7.2 L2.3 8.3 L3.6 9.4 M6.6 7.2 L7.9 8.3 L6.6 9.4" stroke="#4a3226" stroke-width="0.85" fill="none"/><path d="M2 5 V2.8 L4.6 0.3 H9 V5 Z" fill="#a9b3bb"/><path d="M2 2.8 L4.6 0.3 V2.8 Z" fill="#d5dade"/><path d="M6.2 0.6 V4.6 M7.8 0.6 V4.6" stroke="#e9ecee" stroke-width="0.5"/></svg>
<div class="b" style="left:949px;top:44px;width:39.2px;height:17px;">
<span class="t " style="left:0.90px;top:1.70px;line-height:14px;font-size:8.90px;color:#000;transform:scaleX(1.0597);">font_certs.xml</span>
</div>
<svg class="b" style="left:993.00px;top:49.50px;" width="9" height="7" viewBox="0 0 9 7"><path d="M0.8 1 L4.5 5 L8.2 1" fill="none" stroke="#555" stroke-width="1.1"/></svg>
<div class="b" style="left:1008.00px;top:43.00px;width:16.00px;height:469.00px;background:#f2f2f2;"></div>
<div class="b" style="left:1008.00px;top:43.00px;width:1.00px;height:469.00px;background:#d1d1d1;"></div>
<svg class="b" style="left:1011.00px;top:49.00px;" width="11" height="9" viewBox="0 0 11 9"><path d="M0.6 8.6 C0.6 4.6 2.6 2.2 5.8 2.2 C8.8 2.2 10.4 3.4 10.8 5.2 L9.4 5.6 C9 4.8 8.4 4.6 7.8 5 L7.2 8.6 H5.6 L5.4 6.6 L3.4 6.8 L3 8.6 Z" fill="#6e6e6e"/></svg>
<span class="t" style="transform-origin:0 0;transform:rotate(90deg) scaleX(0.9397);line-height:12px;left:1023.10px;top:63.50px;font-size:8.90px;color:#000;">Gradle</span>
<svg class="b" style="left:1011.00px;top:102.00px;" width="11" height="11" viewBox="0 0 11 11"><rect x="0.5" y="0.5" width="10" height="10" fill="#c7c7c7" stroke="#5e5e5e" stroke-width="0.9"/><path d="M0.5 0.5 L10.5 10.5 M10.5 0.5 L0.5 10.5" stroke="#5e5e5e" stroke-width="0.9"/></svg>
<span class="t" style="transform-origin:0 0;transform:rotate(90deg) scaleX(0.9069);line-height:12px;left:1023.10px;top:114.40px;font-size:8.90px;color:#000;">Elm</span>
<svg class="b" style="left:1011.50px;top:144.00px;" width="10" height="10" viewBox="0 0 10 10"><path d="M6 0 H9.4 L3.4 6 L1.7 4.3 Z" fill="#40c4ff"/><path d="M6 5 H9.4 L6.6 7.6 L9.4 10 H6 L3.4 7.6 Z" fill="#1e88e5"/></svg>
<span class="t" style="transform-origin:0 0;transform:rotate(90deg) scaleX(0.9129);line-height:12px;left:1023.10px;top:158.00px;font-size:8.90px;color:#000;">Flutter Inspector</span>
<svg class="b" style="left:1011.50px;top:240.00px;" width="10" height="10" viewBox="0 0 10 10"><path d="M6 0 H9.4 L3.4 6 L1.7 4.3 Z" fill="#40c4ff"/><path d="M6 5 H9.4 L6.6 7.6 L9.4 10 H6 L3.4 7.6 Z" fill="#1e88e5"/></svg>
<span class="t" style="transform-origin:0 0;transform:rotate(90deg) scaleX(0.9447);line-height:12px;left:1023.10px;top:252.80px;font-size:8.90px;color:#000;">Flutter Outline</span>
<svg class="b" style="left:1011.50px;top:327.00px;" width="10" height="10" viewBox="0 0 10 10"><path d="M6 0 H9.4 L3.4 6 L1.7 4.3 Z" fill="#40c4ff"/><path d="M6 5 H9.4 L6.6 7.6 L9.4 10 H6 L3.4 7.6 Z" fill="#1e88e5"/></svg>
<span class="t" style="transform-origin:0 0;transform:rotate(90deg) scaleX(0.9245);line-height:12px;left:1023.10px;top:340.30px;font-size:8.90px;color:#000;">Flutter Performance</span>
<svg class="b" style="left:1011.00px;top:433.00px;" width="11" height="11" viewBox="0 0 11 11"><rect x="1" y="1.4" width="5.6" height="8.4" rx="0.8" fill="none" stroke="#6e6e6e" stroke-width="1"/><rect x="6.4" y="4.6" width="4" height="4" fill="#f2f2f2" stroke="#9c6fd6" stroke-width="0.9"/></svg>
<span class="t" style="transform-origin:0 0;transform:rotate(90deg) scaleX(0.9323);line-height:12px;left:1023.10px;top:446.80px;font-size:8.90px;color:#000;">Emulator</span>
<svg class="b" style="left:1011.50px;top:497.00px;" width="10" height="12" viewBox="0 0 10 12"><rect x="1.2" y="0.8" width="7.4" height="10.4" rx="1" fill="none" stroke="#5e5e5e" stroke-width="1.1"/><path d="M3.6 9.4 H6.4" stroke="#5e5e5e" stroke-width="0.9"/></svg>
<div class="b" style="left:17.00px;top:357.00px;width:991.00px;height:19.00px;background:#f2f2f2;"></div>
<div class="b" style="left:17.00px;top:376.00px;width:991.00px;height:1.00px;background:#d1d1d1;"></div>
<span class="t " style="left:21.00px;top:360.00px;line-height:14px;font-size:8.90px;color:#000;transform:scaleX(0.9882);">Build:</span>
<span class="t " style="left:57.50px;top:360.00px;line-height:14px;font-size:8.90px;color:#000;transform:scaleX(0.9350);">Sync</span>
<svg class="b" style="left:81.00px;top:363.50px;" width="7" height="7" viewBox="0 0 7 7"><path d="M1 1 L6 6 M6 1 L1 6" stroke="#b0b0b0" stroke-width="0.9"/></svg>
<span class="t " style="left:105.00px;top:360.00px;line-height:14px;font-size:8.90px;color:#000;transform:scaleX(1.0413);">Build Output</span>
<svg class="b" style="left:161.00px;top:363.50px;" width="7" height="7" viewBox="0 0 7 7"><path d="M1 1 L6 6 M6 1 L1 6" stroke="#b0b0b0" stroke-width="0.9"/></svg>
<div class="b" style="left:96.00px;top:374.20px;width:76.00px;height:2.40px;background:#94a7c0;"></div>
<span class="t " style="left:184.50px;top:360.00px;line-height:14px;font-size:8.90px;color:#000;transform:scaleX(1.0018);">Build Analyzer</span>
<svg class="b" style="left:246.00px;top:363.50px;" width="7" height="7" viewBox="0 0 7 7"><path d="M1 1 L6 6 M6 1 L1 6" stroke="#b0b0b0" stroke-width="0.9"/></svg>
<svg class="b" style="left:974.00px;top:361.30px;" width="10.4" height="10.4" viewBox="0 0 12 12"><path d="M9.60 6.00 L11.60 6.00 M8.55 8.55 L9.96 9.96 M6.00 9.60 L6.00 11.60 M3.45 8.55 L2.04 9.96 M2.40 6.00 L0.40 6.00 M3.45 3.45 L2.04 2.04 M6.00 2.40 L6.00 0.40 M8.55 3.45 L9.96 2.04 " stroke="#6e6e6e" stroke-width="2.2"/><circle cx="6" cy="6" r="3.1" fill="none" stroke="#6e6e6e" stroke-width="2"/></svg>
<div class="b" style="left:993.80px;top:365.40px;width:9.20px;height:1.40px;background:#6e6e6e;"></div>
<div class="b" style="left:17.00px;top:377.00px;width:20.00px;height:135.00px;background:#f2f2f2;"></div>
<div class="b" style="left:37.00px;top:377.00px;width:1.00px;height:135.00px;background:#d1d1d1;"></div>
<svg class="b" style="left:20.00px;top:381.00px;" width="14" height="13" viewBox="0 0 14 13"><path d="M1.6 5.8 L7.6 1.8" stroke="#4fa25f" stroke-width="2.4"/><path d="M5.4 4.4 L11.6 11.4" stroke="#4fa25f" stroke-width="2"/></svg>
<svg class="b" style="left:21.00px;top:401.00px;" width="12" height="12" viewBox="0 0 12 12"><path d="M6.2 1 L11 5.8 L9.4 6.2 L7.8 7.8 L7.6 10 L2 4.4 L4.2 4.2 L5.8 2.6 Z" fill="#6e6e6e"/><path d="M4.6 7.4 L1 11" stroke="#6e6e6e" stroke-width="1.2"/></svg>
<svg class="b" style="left:20.50px;top:423.00px;" width="13" height="10" viewBox="0 0 13 10"><path d="M0.6 4.4 C2.2 1.6 4 1 5.6 1 C7.2 1 9 1.6 10.6 4.4 C9 7.2 7.2 7.8 5.6 7.8 C4 7.8 2.2 7.2 0.6 4.4 Z" fill="none" stroke="#6e6e6e" stroke-width="1.1"/><circle cx="5.6" cy="4.4" r="1.8" fill="#6e6e6e"/><path d="M9.6 8 H12.6 L11.1 9.8 Z" fill="#6e6e6e"/></svg>
<div class="b" style="left:38.00px;top:377.00px;width:688.00px;height:135.00px;background:#fff;"></div>
<div class="b" style="left:38.00px;top:423.00px;width:679.00px;height:15.00px;background:#d5d5d5;"></div>
<div class="b" style="left:717.00px;top:377.00px;width:9.00px;height:135.00px;background:#ececec;"></div>
<div class="b" style="left:717.00px;top:423.00px;width:9.00px;height:15.00px;background:#cfcfcf;"></div>
<svg class="b" style="left:40.00px;top:381.80px;" width="9" height="7" viewBox="0 0 9 7"><path d="M1.2 0.2 H7.6 L4.4 5.6 Z" fill="#999"/></svg>
<svg class="b" style="left:54.60px;top:380.80px;" width="9.6" height="9.6" viewBox="0 0 12 12"><circle cx="6" cy="6" r="5.6" fill="#e67878"/><rect x="5.1" y="2.4" width="1.8" height="4.4" rx="0.5" fill="#fff"/><rect x="5.1" y="7.8" width="1.8" height="1.8" rx="0.5" fill="#fff"/></svg>
<span class="t " style="left:67.50px;top:379.10px;line-height:14px;font-size:8.90px;color:#000;transform:scaleX(0.9230);font-weight:bold;">Build: failed</span>
<span class="t " style="left:117.00px;top:379.10px;line-height:14px;font-size:8.90px;color:#8c8c8c;transform:scaleX(0.9575);">at 13-08-2021 19:21 with 4 errors</span>
<span class="t " style="left:669.00px;top:379.10px;line-height:14px;font-size:8.90px;color:#8c8c8c;transform:scaleX(0.8870);">29 s 127 ms</span>
<svg class="b" style="left:54.00px;top:396.80px;" width="9" height="7" viewBox="0 0 9 7"><path d="M1.2 0.2 H7.6 L4.4 5.6 Z" fill="#999"/></svg>
<svg class="b" style="left:68.10px;top:395.80px;" width="9.6" height="9.6" viewBox="0 0 12 12"><circle cx="6" cy="6" r="5.6" fill="#e67878"/><rect x="5.1" y="2.4" width="1.8" height="4.4" rx="0.5" fill="#fff"/><rect x="5.1" y="7.8" width="1.8" height="1.8" rx="0.5" fill="#fff"/></svg>
<span class="t " style="left:80.50px;top:394.10px;line-height:14px;font-size:8.90px;color:#000;transform:scaleX(0.9800);">:app:mergeDebugResources</span>
<span class="t " style="left:196.00px;top:394.10px;line-height:14px;font-size:8.90px;color:#8c8c8c;transform:scaleX(0.9458);">4 errors</span>
<span class="t " style="left:669.00px;top:394.10px;line-height:14px;font-size:8.90px;color:#8c8c8c;transform:scaleX(0.8870);">28 s 659 ms</span>
<svg class="b" style="left:67.00px;top:411.80px;" width="9" height="7" viewBox="0 0 9 7"><path d="M1.2 0.2 H7.6 L4.4 5.6 Z" fill="#999"/></svg>
<svg class="b" style="left:81.00px;top:410.40px;" width="11" height="11" viewBox="0 0 12 12"><rect x="0" y="6" width="11.8" height="4.6" fill="#f0884a"/><path d="M3.6 7.2 L2.3 8.3 L3.6 9.4 M6.6 7.2 L7.9 8.3 L6.6 9.4" stroke="#4a3226" stroke-width="0.85" fill="none"/><path d="M2 5 V2.8 L4.6 0.3 H9 V5 Z" fill="#a9b3bb"/><path d="M2 2.8 L4.6 0.3 V2.8 Z" fill="#d5dade"/><path d="M6.2 0.6 V4.6 M7.8 0.6 V4.6" stroke="#e9ecee" stroke-width="0.5"/></svg>
<span class="t " style="left:94.50px;top:409.10px;line-height:14px;font-size:8.90px;color:#000;transform:scaleX(1.0095);">mobilertc/build/.transforms/ab64ab389a1ce4a1a091cc31ca2a905a/jetified-mobilertc/res/values/values.xml</span>
<span class="t " style="left:521.00px;top:409.10px;line-height:14px;font-size:8.90px;color:#8c8c8c;transform:scaleX(0.9458);">2 errors</span>
<svg class="b" style="left:95.10px;top:425.80px;" width="9.6" height="9.6" viewBox="0 0 12 12"><circle cx="6" cy="6" r="5.6" fill="#e67878"/><rect x="5.1" y="2.4" width="1.8" height="4.4" rx="0.5" fill="#fff"/><rect x="5.1" y="7.8" width="1.8" height="1.8" rx="0.5" fill="#fff"/></svg>
<span class="t " style="left:108.00px;top:424.10px;line-height:14px;font-size:8.90px;color:#000;transform:scaleX(1.0215);">Android resource compilation failed</span>
<svg class="b" style="left:95.10px;top:440.80px;" width="9.6" height="9.6" viewBox="0 0 12 12"><circle cx="6" cy="6" r="5.6" fill="#e67878"/><rect x="5.1" y="2.4" width="1.8" height="4.4" rx="0.5" fill="#fff"/><rect x="5.1" y="7.8" width="1.8" height="1.8" rx="0.5" fill="#fff"/></svg>
<span class="t " style="left:108.00px;top:439.10px;line-height:14px;font-size:8.90px;color:#000;transform:scaleX(1.0215);">Android resource compilation failed</span>
<svg class="b" style="left:95.10px;top:470.80px;" width="9.6" height="9.6" viewBox="0 0 12 12"><circle cx="6" cy="6" r="5.6" fill="#e67878"/><rect x="5.1" y="2.4" width="1.8" height="4.4" rx="0.5" fill="#fff"/><rect x="5.1" y="7.8" width="1.8" height="1.8" rx="0.5" fill="#fff"/></svg>
<span class="t " style="left:108.00px;top:469.10px;line-height:14px;font-size:8.90px;color:#000;transform:scaleX(1.0215);">Android resource compilation failed</span>
<svg class="b" style="left:81.60px;top:485.80px;" width="9.6" height="9.6" viewBox="0 0 12 12"><circle cx="6" cy="6" r="5.6" fill="#e67878"/><rect x="5.1" y="2.4" width="1.8" height="4.4" rx="0.5" fill="#fff"/><rect x="5.1" y="7.8" width="1.8" height="1.8" rx="0.5" fill="#fff"/></svg>
<span class="t " style="left:94.50px;top:484.10px;line-height:14px;font-size:8.90px;color:#000;transform:scaleX(1.0215);">Android resource compilation failed</span>
<svg class="b" style="left:67.60px;top:500.80px;" width="9.6" height="9.6" viewBox="0 0 12 12"><circle cx="6" cy="6" r="5.6" fill="#e67878"/><rect x="5.1" y="2.4" width="1.8" height="4.4" rx="0.5" fill="#fff"/><rect x="5.1" y="7.8" width="1.8" height="1.8" rx="0.5" fill="#fff"/></svg>
<span class="t " style="left:81.00px;top:499.10px;line-height:14px;font-size:8.90px;color:#000;transform:scaleX(1.0215);">Android resource compilation failed</span>
<svg class="b" style="left:67.00px;top:456.80px;" width="9" height="7" viewBox="0 0 9 7"><path d="M1.2 0.2 H7.6 L4.4 5.6 Z" fill="#999"/></svg>
<span class="t " style="left:81.00px;top:454.10px;line-height:14px;font-size:8.90px;color:#000;transform:scaleX(1.0277);">app/build/intermediates/incremental/mergeDebugResources/merged.dir/values/values.xml</span>
<span class="t " style="left:450.00px;top:454.10px;line-height:14px;font-size:8.90px;color:#8c8c8c;transform:scaleX(0.9538);">1 error</span>
<div class="b" style="left:726.00px;top:377.00px;width:259.00px;height:135.00px;background:#fff;"></div>
<div class="b" style="left:987.00px;top:377.00px;width:21.00px;height:135.00px;background:#f4f4f4;"></div>
<div class="b" style="left:985.00px;top:377.00px;width:2.00px;height:135.00px;background:#fff;"></div>
<div class="c" style="left:734.50px;top:377.80px;"><a class="lk">C:\Android\code\GMS-DOB-latest\GMS-DOB-latest</a></div>
<div class="c" style="left:741.10px;top:392.80px;"><a class="lk">\GMS-DOB\mobilertc\build\</a></div>
<div class="c" style="left:741.10px;top:407.80px;"><a class="lk">.transforms</a></div>
<div class="c" style="left:741.10px;top:422.80px;"><a class="lk">\ab64ab389a1ce4a1a091cc31ca2a905a\jetified</a></div>
<div class="c" style="left:741.10px;top:437.80px;"><a class="lk">-mobilertc\res\values\values</a></div>
<div class="c" style="left:741.10px;top:452.80px;"><a class="lk">.xml:5763:5</a><span style="color:#7f0000">-5768:25: AAPT: error: duplicate</span></div>
<div class="c" style="left:741.10px;top:467.80px;"><span style="color:#7f0000"> value for resource 'attr/progress' with</span></div>
<div class="c" style="left:741.10px;top:482.80px;"><span style="color:#7f0000">config ''.</span></div>
<div class="b" style="left:990.00px;top:380.40px;width:15.80px;height:15.60px;background:#d9d9d9;border-radius:2px;"></div>
<div class="b" style="left:990.00px;top:399.60px;width:15.80px;height:15.60px;background:#d9d9d9;border-radius:2px;"></div>
<svg class="b" style="left:992.00px;top:382.40px;" width="12" height="12" viewBox="0 0 12 12"><path d="M1 1.8 H10.4 M1 5 H8.6 A2.1 2.1 0 0 1 8.6 9.2 H6.4" fill="none" stroke="#5e5e5e" stroke-width="1.2"/><path d="M7.6 7.4 L5.6 9.2 L7.6 11" fill="none" stroke="#5e5e5e" stroke-width="1.1"/><path d="M1 9.2 H3.4" stroke="#5e5e5e" stroke-width="1.2"/></svg>
<svg class="b" style="left:992.00px;top:401.60px;" width="12" height="12" viewBox="0 0 12 12"><path d="M1 10.4 H10.6 M1 7.4 H4.2 M1 4.4 H3.4" stroke="#5e5e5e" stroke-width="1.2"/><path d="M7.4 0.8 V7.6 M4.8 5 L7.4 7.8 L10 5" fill="none" stroke="#5e5e5e" stroke-width="1.2"/></svg>
<div class="b" style="left:0.00px;top:512.00px;width:1024.00px;height:1.00px;background:#d1d1d1;"></div>
<div class="b" style="left:0.00px;top:513.00px;width:1024.00px;height:16.00px;background:#f2f2f2;"></div>
<div class="b" style="left:0.00px;top:528.60px;width:1024.00px;height:0.80px;background:#e3e3e3;"></div>
<div class="b" style="left:430.50px;top:513.00px;width:46.50px;height:15.60px;background:#bdbdbd;"></div>
<svg class="b" style="left:24.60px;top:517.60px;" width="8" height="7" viewBox="0 0 8 7"><path d="M0 0.9 H1.3 M0 3.4 H1.3 M0 5.9 H1.3 M2.4 0.9 H7.4 M2.4 3.4 H7.4 M2.4 5.9 H7.4" stroke="#5e5e5e" stroke-width="1"/></svg>
<span class="t " style="left:36.30px;top:515.00px;line-height:14px;font-size:8.90px;color:#000;transform:scaleX(0.9277);">TODO</span>
<svg class="b" style="left:75.60px;top:517.30px;" width="9" height="8" viewBox="0 0 9 8"><rect x="0" y="0" width="8" height="7.2" fill="#5e5e5e"/><path d="M1.4 1.8 L3.2 3.4 L1.4 5 M4 5.4 H6.4" stroke="#fff" stroke-width="0.8" fill="none"/></svg>
<span class="t " style="left:87.50px;top:515.00px;line-height:14px;font-size:8.90px;color:#000;transform:scaleX(0.9961);">Terminal</span>
<svg class="b" style="left:138.00px;top:517.00px;" width="10" height="10" viewBox="0 0 10 10"><rect x="0.5" y="0.5" width="8.6" height="8.6" fill="#c7c7c7" stroke="#5e5e5e" stroke-width="0.9"/><path d="M0.5 0.5 L9.1 9.1 M9.1 0.5 L0.5 9.1" stroke="#5e5e5e" stroke-width="0.9"/></svg>
<span class="t " style="left:150.50px;top:515.00px;line-height:14px;font-size:8.90px;color:#000;transform:scaleX(0.9268);">Elm Compiler</span>
<svg class="b" style="left:217.00px;top:518.00px;" width="10" height="8" viewBox="0 0 10 8"><path d="M0 1 H9 M0 3.8 H6.4 M0 6.6 H4.6" stroke="#5e5e5e" stroke-width="1.1"/></svg>
<span class="t " style="left:229.50px;top:515.00px;line-height:14px;font-size:8.90px;color:#000;transform:scaleX(0.9423);"><u>6</u>: Logcat</span>
<svg class="b" style="left:280.50px;top:517.50px;" width="7" height="8" viewBox="0 0 7 8"><path d="M0.4 0.4 L6.4 4 L0.4 7.6 Z" fill="#5e5e5e"/></svg>
<span class="t " style="left:291.50px;top:515.00px;line-height:14px;font-size:8.90px;color:#000;transform:scaleX(0.9344);"><u>4</u>: Run</span>
<svg class="b" style="left:333.50px;top:517.00px;" width="9" height="10" viewBox="0 0 9 10"><ellipse cx="4.3" cy="1.8" rx="3.8" ry="1.5" fill="#5e5e5e"/><path d="M0.5 3 V7.6 C0.5 9.6 8.1 9.6 8.1 7.6 V3 C8.1 4.8 0.5 4.8 0.5 3 Z" fill="#5e5e5e"/><path d="M0.5 5.4 C0.5 7.2 8.1 7.2 8.1 5.4" stroke="#f2f2f2" stroke-width="0.6" fill="none"/></svg>
<span class="t " style="left:346.00px;top:515.00px;line-height:14px;font-size:8.90px;color:#000;transform:scaleX(0.9589);">Database Inspector</span>
<svg class="b" style="left:436.50px;top:516.60px;" width="11" height="10" viewBox="0 0 11 10"><path d="M1.2 4.6 L5.8 1.4" stroke="#5e5e5e" stroke-width="1.9"/><path d="M4.2 3.4 L9 8.8" stroke="#5e5e5e" stroke-width="1.5"/></svg>
<span class="t " style="left:450.00px;top:515.00px;line-height:14px;font-size:8.90px;color:#000;transform:scaleX(1.0106);">Build</span>
<svg class="b" style="left:483.50px;top:517.50px;" width="10" height="8" viewBox="0 0 10 8"><path d="M1 7 A4 4 0 0 1 9 7" fill="none" stroke="#5e5e5e" stroke-width="1.2"/><path d="M4.6 7 L7.2 3.4" stroke="#5e5e5e" stroke-width="1.1"/></svg>
<span class="t " style="left:497.00px;top:515.00px;line-height:14px;font-size:8.90px;color:#000;transform:scaleX(0.9933);">Profiler</span>
<svg class="b" style="left:855.00px;top:516.50px;" width="10.4" height="10.4" viewBox="0 0 10.4 10.4"><circle cx="5.2" cy="5.2" r="5" fill="#59a869"/><text x="5.2" y="8" text-anchor="middle" font-size="7.4" font-weight="bold" fill="#fff" font-family="Liberation Sans,sans-serif">5</text></svg>
<span class="t " style="left:867.50px;top:515.00px;line-height:14px;font-size:8.90px;color:#000;transform:scaleX(0.9357);">Event Log</span>
<svg class="b" style="left:921.50px;top:517.00px;" width="11" height="10" viewBox="0 0 11 10"><rect x="0.5" y="0.5" width="7" height="5.4" fill="none" stroke="#5e5e5e" stroke-width="0.9"/><rect x="2.6" y="2.6" width="7" height="5.4" fill="#f2f2f2" stroke="#5e5e5e" stroke-width="0.9"/><circle cx="8.6" cy="7.8" r="1.6" fill="#f2f2f2" stroke="#389fd6" stroke-width="0.9"/></svg>
<span class="t " style="left:935.00px;top:515.00px;line-height:14px;font-size:8.90px;color:#000;transform:scaleX(0.9727);">Layout Inspector</span>
<div class="b" style="left:0.00px;top:529.40px;width:1024.00px;height:15.00px;background:#f2f2f2;"></div>
<svg class="b" style="left:4.00px;top:531.60px;" width="10" height="10" viewBox="0 0 10 10"><rect x="0.5" y="2.2" width="6.6" height="6.6" rx="1" fill="none" stroke="#8a8a8a" stroke-width="0.9"/><rect x="2.2" y="0.5" width="6.6" height="6.6" rx="1" fill="#f2f2f2" stroke="#8a8a8a" stroke-width="0.9"/></svg>
<span class="t " style="left:21.00px;top:529.90px;line-height:14px;font-size:8.90px;color:#000;transform:scaleX(0.9877);">Gradle build failed in 29 s 126 ms (moments ago)</span>
<span class="t " style="left:744.00px;top:529.90px;line-height:14px;font-size:8.90px;color:#000;transform:scaleX(0.9419);">283 chars, 5 line breaks</span>
<span class="t " style="left:845.00px;top:529.90px;line-height:14px;font-size:8.90px;color:#000;transform:scaleX(0.8817);">5763:4</span>
<span class="t " style="left:879.00px;top:529.90px;line-height:14px;font-size:8.90px;color:#000;transform:scaleX(0.9148);">LF</span>
<span class="t " style="left:897.00px;top:529.90px;line-height:14px;font-size:8.90px;color:#8c8c8c;transform:scaleX(0.9123);">UTF-8</span>
<span class="t " style="left:929.00px;top:529.90px;line-height:14px;font-size:8.90px;color:#000;transform:scaleX(0.9265);">4 spaces</span>
<svg class="b" style="left:970.60px;top:531.50px;" width="9" height="10" viewBox="0 0 9 10"><rect x="0.6" y="4.4" width="6" height="4.6" fill="#5e5e5e"/><path d="M4.4 4.4 V2.6 A1.8 1.8 0 0 1 8 2.6 V3.4" fill="none" stroke="#5e5e5e" stroke-width="1"/></svg>
<svg class="b" style="left:988.20px;top:531.50px;" width="10" height="10" viewBox="0 0 10 10"><path d="M2.6 3 H7.4 L6.8 0.8 H3.2 Z" fill="#5e5e5e"/><path d="M1 3.4 H9" stroke="#5e5e5e" stroke-width="0.9"/><circle cx="5" cy="5.6" r="1.7" fill="none" stroke="#5e5e5e" stroke-width="0.9"/><path d="M1.6 9.8 C1.8 7.8 3.4 7.4 5 7.4 C6.6 7.4 8.2 7.8 8.4 9.8 Z" fill="#5e5e5e"/></svg>
<svg class="b" style="left:1006.00px;top:531.80px;" width="10" height="10" viewBox="0 0 10 10"><circle cx="5" cy="5" r="4.7" fill="#e2574f"/><rect x="4.3" y="2" width="1.4" height="3.8" fill="#fff"/><rect x="4.3" y="6.7" width="1.4" height="1.4" fill="#fff"/></svg>
<div class="b" style="left:0.00px;top:544.00px;width:1024.00px;height:31.00px;background:#1e2f3b;background:linear-gradient(90deg,#1d303c 0%,#20323f 45%,#1c2c44 100%);"></div>
<svg class="b" style="left:12.00px;top:554.00px;" width="12" height="12" viewBox="0 0 12 12"><path d="M0 1.7 L5.3 1 V5.6 H0 Z M6.1 0.9 L12 0 V5.6 H6.1 Z M0 6.4 H5.3 V11 L0 10.3 Z M6.1 6.4 H12 V12 L6.1 11.1 Z" fill="#fff"/></svg>
<div class="b" style="left:36.00px;top:545.20px;width:258.00px;height:29.80px;background:#f1f1f1;"></div>
<svg class="b" style="left:45.00px;top:553.50px;" width="14" height="14" viewBox="0 0 14 14"><circle cx="8" cy="5.4" r="3.6" fill="none" stroke="#333" stroke-width="1.1"/><path d="M5.4 8 L1.4 12.2" stroke="#333" stroke-width="1.2"/></svg>
<span class="t " style="left:66.30px;top:552.60px;line-height:16px;font-size:12.20px;color:#505050;transform:scaleX(0.8830);-webkit-text-stroke:0;">Type here to search</span>
<svg class="b" style="left:305.40px;top:552.90px;" width="13" height="13" viewBox="0 0 13 13"><circle cx="6.5" cy="6.5" r="5" fill="none" stroke="#fff" stroke-width="1.5"/></svg>
<svg class="b" style="left:341.00px;top:553.50px;" width="14" height="12" viewBox="0 0 14 12"><rect x="2.2" y="3.4" width="6.6" height="5.2" fill="none" stroke="#fff" stroke-width="1.1"/><path d="M0.8 1.4 H2.6 M8.4 1.4 H10.2 M0.8 10.6 H2.6 M8.4 10.6 H10.2" stroke="#fff" stroke-width="1.1"/><path d="M2.2 1 V3 M8.8 1 V3 M2.2 9 V11 M8.8 9 V11" stroke="#fff" stroke-width="1"/><path d="M11.8 3.6 V10.8" stroke="#fff" stroke-width="1.1"/><rect x="11.2" y="0.8" width="1.3" height="1.4" fill="#fff"/></svg>
<div class="b" style="left:625.00px;top:544.00px;width:33.40px;height:31.00px;background:#3d4c58;"></div>
<div class="b" style="left:659.20px;top:546.00px;width:0.80px;height:27.00px;background:#46545f;"></div>
<div class="b" style="left:370.00px;top:573.00px;width:31.00px;height:2.00px;background:#8fc4ec;"></div>
<div class="b" style="left:408.00px;top:573.00px;width:30.00px;height:2.00px;background:#8fc4ec;"></div>
<div class="b" style="left:517.50px;top:573.00px;width:30.50px;height:2.00px;background:#8fc4ec;"></div>
<div class="b" style="left:554.50px;top:573.00px;width:30.50px;height:2.00px;background:#8fc4ec;"></div>
<div class="b" style="left:591.50px;top:573.00px;width:30.50px;height:2.00px;background:#8fc4ec;"></div>
<div class="b" style="left:664.50px;top:573.00px;width:30.50px;height:2.00px;background:#8fc4ec;"></div>
<div class="b" style="left:701.50px;top:573.00px;width:30.50px;height:2.00px;background:#8fc4ec;"></div>
<div class="b" style="left:625.00px;top:573.00px;width:33.40px;height:2.00px;background:#9fcdf0;"></div>
<svg class="b" style="left:375.50px;top:550.00px;" width="20" height="20" viewBox="0 0 20 20"><circle cx="10" cy="10" r="8.6" fill="#1a9fe0"/><path d="M1.6 11 C2 5 7 2 11 2.4 C16 3 18.6 6.6 18.4 10 C17 6.6 13 5.4 10 6.6 C7 8 6.4 11 8 13.6 C5 13 3.6 11 1.6 11 Z" fill="#35c8a0"/><path d="M8 13.6 C6.4 10 8 7.4 10.6 7 C13 6.8 14.4 8.4 14 10 C13.6 11.6 11.4 11.4 11.8 13 C12.6 15 16 14.6 17.6 12.6 C16.6 16.6 12 19.4 8 18 C5 16.8 3 14 2.4 11.6 C4 13 6 13.6 8 13.6 Z" fill="#0c59a4"/></svg>
<svg class="b" style="left:412.60px;top:551.40px;" width="20" height="17" viewBox="0 0 20 17"><path d="M1 2 H7 L8.6 3.8 H19 V15.6 H1 Z" fill="#e9a93a"/><path d="M1 5.6 H19 V15.6 H1 Z" fill="#fbd667"/><rect x="5" y="9.4" width="10" height="6.2" fill="#3a8fd9"/><rect x="7" y="11.4" width="6" height="4.2" fill="#fbd667"/></svg>
<svg class="b" style="left:450.00px;top:550.50px;" width="18" height="19" viewBox="0 0 18 19"><path d="M5.6 5.4 V3.6 A3.4 3.2 0 0 1 12.4 3.6 V5.4" fill="none" stroke="#f3f3f3" stroke-width="1.3"/><path d="M1 5.2 H17 V17.6 H1 Z" fill="#f3f3f3"/><rect x="5.4" y="8" width="3" height="3" fill="#f25022"/><rect x="9.4" y="8" width="3" height="3" fill="#7fba00"/><rect x="5.4" y="12" width="3" height="3" fill="#00a4ef"/><rect x="9.4" y="12" width="3" height="3" fill="#ffb900"/></svg>
<svg class="b" style="left:486.50px;top:552.00px;" width="20" height="16" viewBox="0 0 20 16"><path d="M1 5.4 L10 0.4 L19 5.4 V15.4 H1 Z" fill="#1f7fd6"/><path d="M1 5.6 L10 11.4 L19 5.6 V15.4 H1 Z" fill="#3ea2f0"/><path d="M1 15.4 L8 9.6 M19 15.4 L12 9.6" stroke="#1f7fd6" stroke-width="0.7"/><path d="M3 6 L10 10.6 L17 6 Z" fill="#f4f9fd"/></svg>
<svg class="b" style="left:522.00px;top:550.50px;" width="22" height="20" viewBox="0 0 22 20"><circle cx="15.6" cy="4.6" r="2.6" fill="#7b83eb"/><circle cx="9.6" cy="3.6" r="3.2" fill="#5059c9"/><path d="M12.6 8 H20 V13.4 A3.6 3.6 0 0 1 12.6 13.4 Z" fill="#7b83eb"/><path d="M5.4 8 H14.6 V14 A4.6 4.6 0 0 1 5.4 14 Z" fill="#5059c9"/><rect x="0.6" y="5" width="9.6" height="9.6" rx="1" fill="#4b53bc"/><path d="M3 7.6 H8 M5.5 7.6 V12.4" stroke="#fff" stroke-width="1.4"/><circle cx="16.4" cy="15.4" r="3.8" fill="#6bb700" stroke="#fff" stroke-width="0.8"/><path d="M14.6 15.4 L16 16.8 L18.2 14.2" stroke="#fff" stroke-width="1" fill="none"/></svg>
<svg class="b" style="left:560.00px;top:550.50px;" width="21" height="20" viewBox="0 0 21 20"><circle cx="9.4" cy="9.4" r="8.6" fill="#e33b2e"/><path d="M9.4 9.4 L2 13.8 A8.6 8.6 0 0 0 9.4 18 L13.6 10.6 Z" fill="#2da94f"/><path d="M9.4 9.4 L13.6 10.6 L9.4 18 A8.6 8.6 0 0 0 17.6 6.6 H9.4 Z" fill="#fdd23a"/><circle cx="9.4" cy="9.4" r="3.9" fill="#fff"/><circle cx="9.4" cy="9.4" r="3.1" fill="#4285f4"/><circle cx="15.6" cy="14.6" r="4.6" fill="#8e24aa"/><text x="15.6" y="16.9" text-anchor="middle" font-size="6.4" fill="#fff" font-family="Liberation Sans,sans-serif">G</text></svg>
<svg class="b" style="left:597.60px;top:551.40px;" width="18" height="17" viewBox="0 0 18 17"><rect x="0" y="0" width="17.4" height="8.6" fill="#7c8c9a"/><rect x="0" y="8.4" width="17.4" height="8.2" fill="#3b6ec4"/><path d="M4.4 8.4 A4.4 3.6 0 0 0 13.2 8.4 Z" fill="#fff"/><path d="M6.8 8.4 A2 1.7 0 0 0 10.8 8.4 Z" fill="#111"/></svg>
<svg class="b" style="left:634.00px;top:550.40px;" width="18" height="18" viewBox="0 0 18 18"><circle cx="9" cy="9" r="8.2" fill="#fff"/><path d="M5.4 5 H12.6 V12.6 H5.4 Z" fill="#3b7fd6"/><path d="M6.4 14 L9 6 L11.6 14" stroke="#1c2b36" stroke-width="1.3" fill="none"/><path d="M4.6 4.6 L6 6.6 M13.4 4.6 L12 6.6" stroke="#3ddc84" stroke-width="1"/></svg>
<svg class="b" style="left:670.80px;top:549.90px;" width="21" height="20" viewBox="0 0 21 20"><path d="M8.6 0.8 A7.4 7.4 0 0 1 8.6 15.6 V18.8 C4.6 16.8 1.2 13.4 1.2 8.2 A7.4 7.4 0 0 1 8.6 0.8 Z" fill="#1ea362"/><path d="M5 6 H7.8 V8.6 L6.4 10.6 H5.4 L6.2 8.8 H5 Z M9.4 6 H12.2 V8.6 L10.8 10.6 H9.8 L10.6 8.8 H9.4 Z" fill="#fff"/><circle cx="15.6" cy="14.6" r="4.6" fill="#8e24aa"/><text x="15.6" y="16.9" text-anchor="middle" font-size="6.4" fill="#fff" font-family="Liberation Sans,sans-serif">G</text></svg>
<svg class="b" style="left:706.00px;top:550.00px;" width="22" height="20" viewBox="0 0 22 20"><path d="M5.4 2.4 L17.4 1 L20.4 15 L8.4 17.6 Z" fill="#b5dcea"/><path d="M5.4 2.4 L17.4 1 L18 3.4 L6 5 Z" fill="#5bb0e6"/><path d="M2 14 L5.4 2.4 L8.4 17.6 L4.6 18.6 Z" fill="#8fa8b8"/><path d="M8 7 L17 5.6 M8.6 9.6 L17.6 8.2 M9.2 12.2 L18.2 10.8" stroke="#8fc0d6" stroke-width="0.8"/></svg>
<svg class="b" style="left:775.00px;top:551.00px;" width="24" height="18" viewBox="0 0 24 18"><path d="M12.6 1 A7 7 0 1 0 19.6 11.4 A5.6 5.6 0 0 1 12.6 1 Z" fill="#f5c243"/><path d="M4 15.6 A2.8 2.8 0 0 1 5.6 10.4 A3.6 3.6 0 0 1 12.4 10.6 A2.6 2.6 0 0 1 13.6 15.6 Z" fill="#e8e4da"/></svg>
<span class="t " style="left:802.00px;top:552.71px;line-height:16px;font-size:11.00px;color:#fff;transform:scaleX(0.9114);">30°C</span>
<svg class="b" style="left:837.00px;top:556.50px;" width="10" height="7" viewBox="0 0 10 7"><path d="M0.8 6 L5 1.4 L9.2 6" fill="none" stroke="#fff" stroke-width="1.1"/></svg>
<svg class="b" style="left:853.00px;top:555.00px;" width="14" height="10" viewBox="0 0 14 10"><rect x="3.6" y="2" width="8.6" height="5.6" fill="none" stroke="#fff" stroke-width="1"/><rect x="12.4" y="3.6" width="1.2" height="2.4" fill="#fff"/><rect x="4.8" y="3.2" width="4.2" height="3.2" fill="#fff"/><path d="M1.6 0.6 V4 M0.4 1.6 H2.8 M1.6 4 L3.4 6" stroke="#fff" stroke-width="0.8"/></svg>
<svg class="b" style="left:870.00px;top:555.00px;" width="13" height="10" viewBox="0 0 13 10"><path d="M0.6 3.4 H2.6 L5.4 0.8 V9.2 L2.6 6.6 H0.6 Z" fill="none" stroke="#fff" stroke-width="0.9"/><path d="M7.6 3.2 L11 6.8 M11 3.2 L7.6 6.8" stroke="#fff" stroke-width="0.9"/></svg>
<svg class="b" style="left:891.00px;top:554.50px;" width="13" height="11" viewBox="0 0 13 11"><path d="M1.4 10.4 A8.8 8.8 0 0 1 10.6 1.4" fill="none" stroke="#8a939a" stroke-width="1"/><path d="M3.8 10.4 A6.4 6.4 0 0 1 10.6 3.8" fill="none" stroke="#fff" stroke-width="1"/><path d="M6.2 10.4 A4 4 0 0 1 10.6 6.2" fill="none" stroke="#fff" stroke-width="1"/><circle cx="10" cy="9.8" r="1.1" fill="#fff"/></svg>
<span class="t " style="left:909.60px;top:547.00px;line-height:14px;font-size:8.90px;color:#fff;transform:scaleX(0.9022);">ENG</span>
<span class="t " style="left:913.40px;top:560.30px;line-height:14px;font-size:8.90px;color:#fff;transform:scaleX(1.0787);">IN</span>
<span class="t " style="left:948.00px;top:547.00px;line-height:14px;font-size:8.90px;color:#fff;transform:scaleX(0.8532);">19:21</span>
<span class="t " style="left:937.00px;top:560.30px;line-height:14px;font-size:8.90px;color:#fff;transform:scaleX(0.9227);">13-08-2021</span>
<svg class="b" style="left:991.60px;top:552.60px;" width="22" height="21" viewBox="0 0 22 21"><path d="M1.4 1.2 H12 V9.6 H5 L2.8 11.8 V9.6 H1.4 Z" fill="#fff"/><path d="M3.2 3.4 H10.2 M3.2 5.2 H10.2 M3.2 7 H8" stroke="#1e2f3b" stroke-width="0.8"/><circle cx="13.2" cy="12.4" r="6.3" fill="#1b2433" stroke="#d8d8d8" stroke-width="0.9"/><text x="13.2" y="15.4" text-anchor="middle" font-size="8.4" font-weight="bold" fill="#fff" font-family="Liberation Sans,sans-serif" letter-spacing="-0.4">20</text></svg>
<div class="b" style="left:0.00px;top:0.00px;width:1024.00px;height:20.00px;background:#f2f2f2;"></div>
<div class="b" style="left:0.00px;top:20.00px;width:1024.00px;height:1.00px;background:#d6d6d6;"></div>
<svg class="b" style="left:5.00px;top:5.20px;" width="12.5" height="8.25" viewBox="0 0 12 8"><path d="M0.3 8 A5.7 5.6 0 0 1 11.7 8 Z" fill="#3ddc84"/><path d="M2.6 3.2 L1.2 0.8 M9.4 3.2 L10.8 0.8" stroke="#3ddc84" stroke-width="0.9" stroke-linecap="round"/><circle cx="3.6" cy="5.6" r="0.6" fill="#fff"/><circle cx="8.4" cy="5.6" r="0.6" fill="#fff"/></svg>
<span class="t " style="left:26.00px;top:3.30px;line-height:14px;font-size:8.90px;color:#000;transform:scaleX(0.9763);"><u>F</u>ile</span>
<span class="t " style="left:49.00px;top:3.30px;line-height:14px;font-size:8.90px;color:#000;transform:scaleX(0.9781);"><u>E</u>dit</span>
<span class="t " style="left:74.00px;top:3.30px;line-height:14px;font-size:8.90px;color:#000;transform:scaleX(0.9932);"><u>V</u>iew</span>
<span class="t " style="left:102.00px;top:3.30px;line-height:14px;font-size:8.90px;color:#000;transform:scaleX(0.9965);"><u>N</u>avigate</span>
<span class="t " style="left:146.50px;top:3.30px;line-height:14px;font-size:8.90px;color:#000;transform:scaleX(0.9636);"><u>C</u>ode</span>
<span class="t " style="left:177.00px;top:3.30px;line-height:14px;font-size:8.90px;color:#000;transform:scaleX(0.9791);">Analy<u>z</u>e</span>
<span class="t " style="left:216.50px;top:3.30px;line-height:14px;font-size:8.90px;color:#000;transform:scaleX(0.9663);"><u>R</u>efactor</span>
<span class="t " style="left:259.50px;top:3.30px;line-height:14px;font-size:8.90px;color:#000;transform:scaleX(1.0106);"><u>B</u>uild</span>
<span class="t " style="left:288.80px;top:3.30px;line-height:14px;font-size:8.90px;color:#000;transform:scaleX(0.9310);">R<u>u</u>n</span>
<span class="t " style="left:313.80px;top:3.30px;line-height:14px;font-size:8.90px;color:#000;transform:scaleX(0.9819);"><u>T</u>ools</span>
<span class="t " style="left:344.00px;top:3.30px;line-height:14px;font-size:8.90px;color:#000;transform:scaleX(0.8743);">VC<u>S</u></span>
<span class="t " style="left:369.00px;top:3.30px;line-height:14px;font-size:8.90px;color:#000;transform:scaleX(1.0362);"><u>W</u>indow</span>
<span class="t " style="left:411.80px;top:3.30px;line-height:14px;font-size:8.90px;color:#000;transform:scaleX(0.9944);"><u>H</u>elp</span>
<span class="t " style="left:451.50px;top:3.30px;line-height:14px;font-size:8.90px;color:#8a8a8a;transform:scaleX(0.9944);">Gowtham Model Schools - ...\ab64ab389a1ce4a1a091cc31ca2a905a\jetified-mobilertc\res\values\values.xml</span>
<div class="b" style="left:933.00px;top:9.60px;width:7.60px;height:1.00px;background:#222;"></div>
<svg class="b" style="left:966.50px;top:4.50px;" width="10" height="10" viewBox="0 0 10 10"><path d="M1.5 3 H7 V8.8 H1.5 Z M3.2 3 V1.3 H8.8 V7 H7" fill="none" stroke="#222" stroke-width="1"/></svg>
<svg class="b" style="left:1002.00px;top:5.20px;" width="10" height="10" viewBox="0 0 10 10"><path d="M1.2 1.2 L8.8 8.6 M8.8 1.2 L1.2 8.6" stroke="#222" stroke-width="1"/></svg>
<div class="b" style="left:0.00px;top:21.00px;width:1024.00px;height:21.00px;background:#f2f2f2;"></div>
<div class="b" style="left:0.00px;top:42.00px;width:1024.00px;height:1.00px;background:#d1d1d1;"></div>
<span class="t " style="left:6.00px;top:24.70px;line-height:14px;font-size:8.90px;color:#000;transform:scaleX(1.0111);font-weight:bold;">mobilertc</span>
<span class="t " style="left:59.00px;top:24.70px;line-height:14px;font-size:8.90px;color:#000;transform:scaleX(1.0371);">build</span>
<span class="t " style="left:91.00px;top:24.70px;line-height:14px;font-size:8.90px;color:#000;transform:scaleX(1.0111);">.transforms</span>
<span class="t " style="left:148.00px;top:24.70px;line-height:14px;font-size:8.90px;color:#000;transform:scaleX(0.9272);">ab64ab389a1ce4a1a091cc31ca2a905a</span>
<span class="t " style="left:305.50px;top:24.70px;line-height:14px;font-size:8.90px;color:#000;transform:scaleX(1.0573);">jetified-mobilertc</span>
<span class="t " style="left:386.50px;top:24.70px;line-height:14px;font-size:8.90px;color:#000;transform:scaleX(0.8493);">res</span>
<span class="t " style="left:409.00px;top:24.70px;line-height:14px;font-size:8.90px;color:#000;transform:scaleX(0.9718);">values</span>
<svg class="b" style="left:49.20px;top:25.50px;" width="5" height="12" viewBox="0 0 5 12"><path d="M0.7 0.5 L4 6 L0.7 11.5" fill="none" stroke="#bdbdbd" stroke-width="0.9"/></svg>
<svg class="b" style="left:81.20px;top:25.50px;" width="5" height="12" viewBox="0 0 5 12"><path d="M0.7 0.5 L4 6 L0.7 11.5" fill="none" stroke="#bdbdbd" stroke-width="0.9"/></svg>
<svg class="b" style="left:138.70px;top:25.50px;" width="5" height="12" viewBox="0 0 5 12"><path d="M0.7 0.5 L4 6 L0.7 11.5" fill="none" stroke="#bdbdbd" stroke-width="0.9"/></svg>
<svg class="b" style="left:295.70px;top:25.50px;" width="5" height="12" viewBox="0 0 5 12"><path d="M0.7 0.5 L4 6 L0.7 11.5" fill="none" stroke="#bdbdbd" stroke-width="0.9"/></svg>
<svg class="b" style="left:376.70px;top:25.50px;" width="5" height="12" viewBox="0 0 5 12"><path d="M0.7 0.5 L4 6 L0.7 11.5" fill="none" stroke="#bdbdbd" stroke-width="0.9"/></svg>
<svg class="b" style="left:399.70px;top:25.50px;" width="5" height="12" viewBox="0 0 5 12"><path d="M0.7 0.5 L4 6 L0.7 11.5" fill="none" stroke="#bdbdbd" stroke-width="0.9"/></svg>
<svg class="b" style="left:436.20px;top:25.50px;" width="5" height="12" viewBox="0 0 5 12"><path d="M0.7 0.5 L4 6 L0.7 11.5" fill="none" stroke="#bdbdbd" stroke-width="0.9"/></svg>
<svg class="b" style="left:444.50px;top:25.50px;" width="11" height="11" viewBox="0 0 12 12"><rect x="0" y="6" width="11.8" height="4.6" fill="#f0884a"/><path d="M3.6 7.2 L2.3 8.3 L3.6 9.4 M6.6 7.2 L7.9 8.3 L6.6 9.4" stroke="#4a3226" stroke-width="0.85" fill="none"/><path d="M2 5 V2.8 L4.6 0.3 H9 V5 Z" fill="#a9b3bb"/><path d="M2 2.8 L4.6 0.3 V2.8 Z" fill="#d5dade"/><path d="M6.2 0.6 V4.6 M7.8 0.6 V4.6" stroke="#e9ecee" stroke-width="0.5"/></svg>
<span class="t " style="left:458.00px;top:24.70px;line-height:14px;font-size:8.90px;color:#000;transform:scaleX(0.9991);">values.xml</span>
<svg class="b" style="left:515.60px;top:24.60px;" width="14" height="13" viewBox="0 0 14 13"><path d="M1.6 5.8 L7.6 1.8" stroke="#4fa25f" stroke-width="2.4"/><path d="M5.4 4.4 L11.6 11.4" stroke="#4fa25f" stroke-width="2"/></svg>
<div class="b" style="left:535.00px;top:25.00px;width:1.00px;height:13.00px;background:#cdcdcd;"></div>
<div class="b" style="left:542.50px;top:23.50px;width:53.50px;height:16.00px;background:#fff;border:1px solid #c4c4c4;border-radius:3px;"></div>
<svg class="b" style="left:548.50px;top:28.50px;" width="10.5" height="6.93" viewBox="0 0 12 8"><path d="M0.3 8 A5.7 5.6 0 0 1 11.7 8 Z" fill="#3ddc84"/><path d="M2.6 3.2 L1.2 0.8 M9.4 3.2 L10.8 0.8" stroke="#3ddc84" stroke-width="0.9" stroke-linecap="round"/><circle cx="3.6" cy="5.6" r="0.6" fill="#fff"/><circle cx="8.4" cy="5.6" r="0.6" fill="#fff"/></svg>
<span class="t " style="left:562.50px;top:24.70px;line-height:14px;font-size:8.90px;color:#000;transform:scaleX(0.9766);">app</span>
<svg class="b" style="left:584.50px;top:30.00px;" width="7" height="5" viewBox="0 0 7 5"><path d="M0 0 H7 L3.5 4.2 Z" fill="#555"/></svg>
<div class="b" style="left:601.50px;top:23.50px;width:110.50px;height:16.00px;background:#fff;border:1px solid #c4c4c4;border-radius:3px;"></div>
<svg class="b" style="left:608.00px;top:26.00px;" width="11" height="12" viewBox="0 0 11 12"><rect x="1" y="0.8" width="6.4" height="9.6" rx="1" fill="none" stroke="#7a7a7a" stroke-width="1"/><circle cx="8.2" cy="9.6" r="1.9" fill="#3bb55a"/></svg>
<span class="t " style="left:621.50px;top:24.70px;line-height:14px;font-size:8.90px;color:#000;transform:scaleX(0.9516);">Google Pixel 3a XL</span>
<svg class="b" style="left:699.50px;top:30.00px;" width="7" height="5" viewBox="0 0 7 5"><path d="M0 0 H7 L3.5 4.2 Z" fill="#555"/></svg>
<svg class="b" style="left:718.50px;top:24.50px;" width="13" height="13" viewBox="0 0 13 13"><path d="M3 1.6 L11 6.5 L3 11.4 Z" fill="#59a869"/></svg>
<svg class="b" style="left:737.50px;top:24.50px;" width="13" height="13" viewBox="0 0 13 13"><path d="M9.4 4 A4 4 0 1 0 10.2 8" fill="none" stroke="#b9b9b9" stroke-width="1.3"/><path d="M7.6 1 L11 4 L7.4 5.4 Z" fill="#b9b9b9"/><text x="7.6" y="12.6" font-size="5" fill="#b9b9b9" font-family="Liberation Sans,sans-serif">A</text></svg>
<svg class="b" style="left:758.00px;top:24.50px;" width="13" height="13" viewBox="0 0 13 13"><path d="M1.5 3 H11 M1.5 5.6 H11 M1.5 8.2 H6.5" stroke="#b9b9b9" stroke-width="1.1"/><path d="M8 9.8 H11.4 M9 8 L7.4 9.8 L9 11.6" stroke="#b9b9b9" stroke-width="1" fill="none"/></svg>
<svg class="b" style="left:776.50px;top:24.50px;" width="13" height="13" viewBox="0 0 13 13"><ellipse cx="6.5" cy="7.2" rx="3.2" ry="4" fill="#59a869"/><circle cx="6.5" cy="3" r="1.8" fill="#59a869"/><path d="M1.2 4.4 L3.6 6 M11.8 4.4 L9.4 6 M0.8 7.6 H3.4 M12.2 7.6 H9.6 M1.4 11.4 L3.8 9.6 M11.6 11.4 L9.2 9.6" stroke="#59a869" stroke-width="1"/></svg>
<svg class="b" style="left:795.50px;top:24.50px;" width="13" height="13" viewBox="0 0 13 13"><path d="M2 1.6 H7.4 V7 C7.4 9.4 5.6 10.8 4.7 11.4 C3.8 10.8 2 9.4 2 7 Z" fill="#b9b9b9"/><path d="M8 5 L12.2 8 L8 11 Z" fill="#b9b9b9" stroke="#f2f2f2" stroke-width="0.8"/></svg>
<svg class="b" style="left:816.00px;top:24.50px;" width="13" height="13" viewBox="0 0 13 13"><path d="M1.6 10 A5.4 5.4 0 0 1 8.2 3.4" fill="none" stroke="#389fd6" stroke-width="1.8"/><path d="M9.8 4.2 A5.4 5.4 0 0 1 11.6 10" fill="none" stroke="#4d4d4d" stroke-width="1.8"/><path d="M6 10.4 L9.6 5.2" stroke="#4d4d4d" stroke-width="1.5"/></svg>
<svg class="b" style="left:836.00px;top:24.50px;" width="13" height="13" viewBox="0 0 13 13"><ellipse cx="5.5" cy="6.6" rx="2.9" ry="3.7" fill="#59a869"/><circle cx="5.5" cy="2.8" r="1.6" fill="#59a869"/><path d="M0.8 4 L3 5.4 M10.2 4 L8 5.4 M0.4 7 H2.8 M1 10.6 L3.2 9" stroke="#59a869" stroke-width="1"/><path d="M7.2 12 L11.8 7.4 M8.6 7.2 H12 V10.6" stroke="#4d4d4d" stroke-width="1.3" fill="none"/></svg>
<svg class="b" style="left:854.50px;top:24.50px;" width="13" height="13" viewBox="0 0 13 13"><rect x="2.4" y="2.4" width="8.2" height="8.2" fill="#c4c4c4"/></svg>
<div class="b" style="left:872.50px;top:25.00px;width:1.00px;height:13.00px;background:#cdcdcd;"></div>
<svg class="b" style="left:879.00px;top:24.50px;" width="13" height="13" viewBox="0 0 13 13"><path d="M0.6 2 H4.6 L5.8 3.4 H11 V10.4 H0.6 Z" fill="#7f8b91"/><rect x="7" y="5.6" width="2.4" height="2.4" fill="#389fd6"/><rect x="10" y="5.6" width="2.4" height="2.4" fill="#389fd6"/><rect x="7" y="8.6" width="2.4" height="2.4" fill="#389fd6"/><rect x="10" y="8.6" width="2.4" height="2.4" fill="#389fd6"/></svg>
<div class="b" style="left:897.50px;top:25.00px;width:1.00px;height:13.00px;background:#cdcdcd;"></div>
<svg class="b" style="left:904.00px;top:24.50px;" width="13" height="13" viewBox="0 0 13 13"><rect x="1.2" y="2" width="10.6" height="9" fill="none" stroke="#4d4d4d" stroke-width="1.2"/><path d="M1.2 3 H11.8" stroke="#4d4d4d" stroke-width="1.6"/><path d="M4.6 5.2 L8.6 7.4 L4.6 9.6 Z" fill="#59a869"/></svg>
<svg class="b" style="left:923.50px;top:24.50px;" width="13" height="13" viewBox="0 0 13 13"><path d="M1 9.6 C1 5.6 3 3.2 6.4 3.2 C9.6 3.2 11.2 4.6 11.6 6.4 L10 6.8 C9.6 6 9 5.8 8.4 6.2 L7.8 9.6 H6 L5.8 7.6 L3.8 7.8 L3.4 9.6 Z" fill="#6e6e6e"/><path d="M8 8.6 L11.6 12 M11.8 9.2 V12.2 H8.8" stroke="#389fd6" stroke-width="1.3" fill="none"/></svg>
<svg class="b" style="left:943.50px;top:24.50px;" width="13" height="13" viewBox="0 0 13 13"><rect x="2" y="1" width="6.6" height="10.4" rx="1" fill="none" stroke="#4d4d4d" stroke-width="1.2"/><path d="M6.4 11.6 A2.8 2.4 0 0 1 12 11.6 Z" fill="#59a869"/></svg>
<svg class="b" style="left:962.50px;top:24.50px;" width="13" height="13" viewBox="0 0 13 13"><path d="M5 1 L9.4 3 V7.6 L5 9.8 L0.8 7.6 V3 Z" fill="#6e6e6e"/><path d="M0.8 3 L5 5.2 L9.4 3 M5 5.2 V9.8" stroke="#f2f2f2" stroke-width="0.7" fill="none"/><path d="M10.6 5.4 V11.6 M8.4 9.4 L10.6 11.8 L12.8 9.4" stroke="#389fd6" stroke-width="1.3" fill="none"/></svg>
<div class="b" style="left:981.50px;top:25.00px;width:1.00px;height:13.00px;background:#cdcdcd;"></div>
<svg class="b" style="left:987.00px;top:24.50px;" width="13" height="13" viewBox="0 0 13 13"><circle cx="5.4" cy="5.4" r="3.7" fill="none" stroke="#4d4d4d" stroke-width="1.4"/><path d="M8.2 8.2 L12 12" stroke="#4d4d4d" stroke-width="1.7"/></svg>
<svg class="b" style="left:1007.00px;top:24.50px;" width="13" height="13" viewBox="0 0 13 13"><rect x="0.5" y="0.5" width="12" height="12" fill="#c9c9c9"/><circle cx="6.5" cy="5" r="2.6" fill="#f2f2f2"/><path d="M1.4 12.5 C1.6 9 4 8 6.5 8 C9 8 11.4 9 11.6 12.5 Z" fill="#f2f2f2"/></svg>
</body></html>
